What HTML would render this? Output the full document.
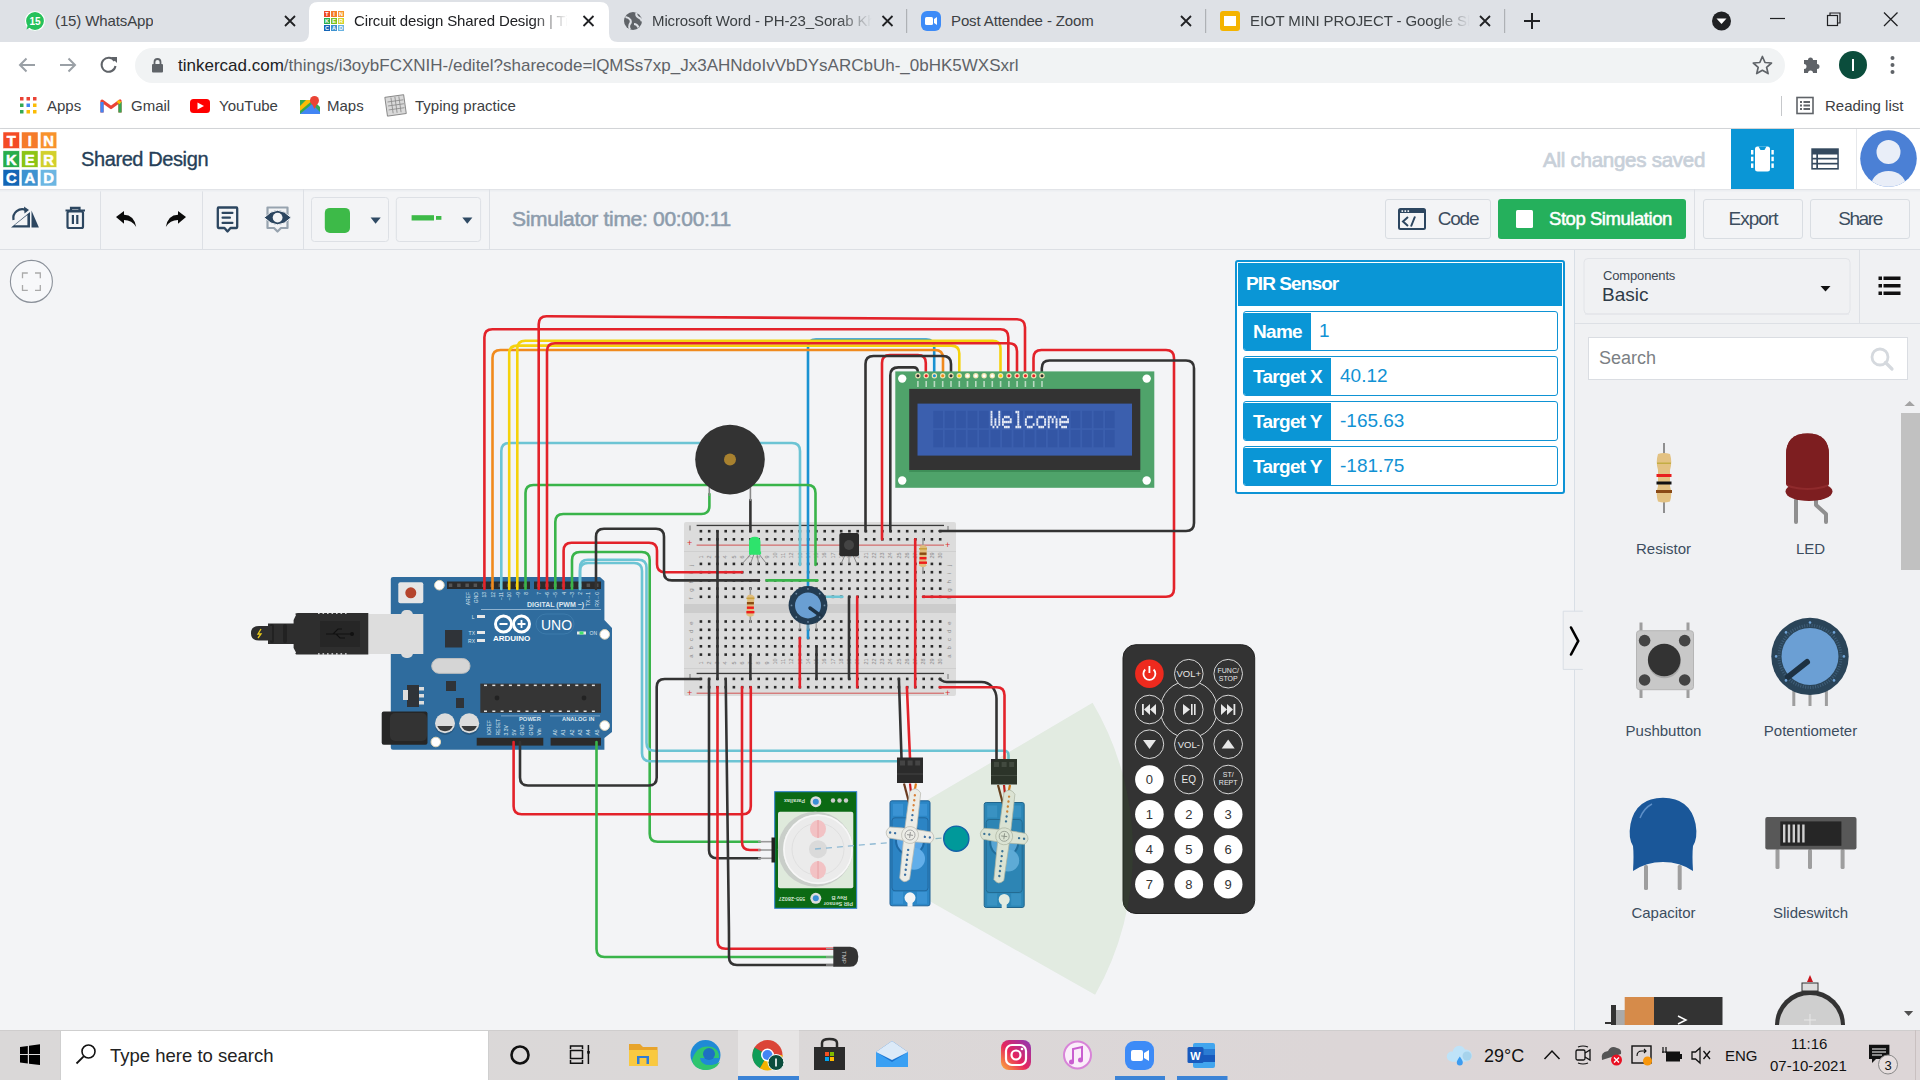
<!DOCTYPE html>
<html><head><meta charset="utf-8">
<style>
*{margin:0;padding:0;box-sizing:border-box}
html,body{width:1920px;height:1080px;overflow:hidden;background:#f3f4f6;font-family:"Liberation Sans",sans-serif}
.a{position:absolute}
#tabs{left:0;top:0;width:1920px;height:42px;background:#dee1e6}
.tab{position:absolute;top:0;height:42px;font-size:15px;color:#3c4043;line-height:42px;white-space:nowrap;overflow:hidden;letter-spacing:-0.12px}
.tabx{position:absolute;top:0;height:42px;}
#tb{left:0;top:42px;width:1920px;height:43px;background:#fff}
#omni{left:135px;top:48px;width:1650px;height:35px;background:#f1f3f4;border-radius:18px}
#bm{left:0;top:85px;width:1920px;height:44px;background:#fff;border-bottom:1px solid #d7d9dc}
.bmt{position:absolute;top:96px;font-size:15px;color:#3c4043;line-height:20px}
#hdr{left:0;top:129px;width:1920px;height:60px;background:#fff;box-shadow:0 1px 3px rgba(0,0,0,.12)}
#tool{left:0;top:189px;width:1920px;height:61px;background:#f3f4f6;border-bottom:1px solid #dcdfe4}
.btn{position:absolute;top:199px;height:40px;border:1px solid #d9dde2;border-radius:3px;background:transparent;color:#3c4d5e;font-size:19px;line-height:38px;text-align:center}
#rp{left:1574px;top:250px;width:346px;height:780px;background:#f0f1f3;border-left:1px solid #d9dfe6}
#taskbar{left:0;top:1030px;width:1920px;height:50px;background:linear-gradient(90deg,#dad8d8 0%,#dbd8d8 40%,#dcd6d7 70%,#ddd6d7 100%);border-top:1px solid #cfcdcd}
.clbl{position:absolute;font-size:15px;color:#3c4d5f;text-align:center;width:140px}
.prow{position:absolute;left:1243px;width:315px;height:40px;border:1px solid #0f93d4;border-radius:3px;background:#fff;overflow:hidden}
.prow .l{position:absolute;left:0;top:1px;height:37px;background:#0a96d6;color:#fff;font-weight:bold;font-size:19px;line-height:38px;padding-left:9px;letter-spacing:-0.7px;white-space:nowrap}
.prow .v{position:absolute;top:0;height:38px;color:#1192d4;font-size:19px;line-height:38px}
</style></head><body>
<!-- CHROME TABS -->
<div id="tabs" class="a"></div>
<svg class="a" style="left:0;top:0" width="1920" height="43" viewBox="0 0 1920 43">
<path d="M300 42 Q309 42 309 33 L309 11 Q309 2 318 2 L600 2 Q609 2 609 11 L609 33 Q609 42 618 42 Z" fill="#fff"/>
<g fill="#aeb1b5"><rect x="906" y="9" width="1.2" height="24"/><rect x="1205" y="9" width="1.2" height="24"/><rect x="1504" y="9" width="1.2" height="24"/></g>
<!-- whatsapp favicon -->
<circle cx="35" cy="21" r="9.5" fill="#25c15b" stroke="#fff" stroke-width="1.2"/><path d="M26.5 29.5 L28 24 L31 27 Z" fill="#25c15b"/>
<text x="35" y="25" font-size="10" font-weight="bold" fill="#fff" text-anchor="middle" font-family="Liberation Sans">15</text>
<!-- tinkercad favicon -->
<g transform="translate(324 11)">
<rect x="0" y="0" width="6" height="6" fill="#ef4b25"/><rect x="7" y="0" width="6" height="6" fill="#f57c2a"/><rect x="14" y="0" width="6" height="6" fill="#f7932c"/>
<rect x="0" y="7" width="6" height="6" fill="#2bae4a"/><rect x="7" y="7" width="6" height="6" fill="#7cc122"/><rect x="14" y="7" width="6" height="6" fill="#d3d12b"/>
<rect x="0" y="14" width="6" height="6" fill="#1565b7"/><rect x="7" y="14" width="6" height="6" fill="#3d91cf"/><rect x="14" y="14" width="6" height="6" fill="#69b3e1"/>
<g font-size="5.5" font-weight="bold" fill="#fff" text-anchor="middle" font-family="Liberation Sans"><text x="3" y="5">T</text><text x="10" y="5">I</text><text x="17" y="5">N</text><text x="3" y="12">K</text><text x="10" y="12">E</text><text x="17" y="12">R</text><text x="3" y="19">C</text><text x="10" y="19">A</text><text x="17" y="19">D</text></g>
</g>
<!-- globe favicon -->
<circle cx="633" cy="21" r="9" fill="#5f6368"/><path d="M625.5 17 Q629 17.5 630.5 20 Q631.5 22.5 629.5 24.5 Q628.5 27 630 29.5" stroke="#dee1e6" stroke-width="2" fill="none"/><path d="M636.5 12.8 Q635.5 16 638.5 17.5 Q641.5 18.5 641.8 21.5 M634 24 Q637 24 638.5 27.5" stroke="#dee1e6" stroke-width="2" fill="none"/>
<!-- zoom favicon -->
<rect x="921" y="11" width="20" height="20" rx="6" fill="#3d8bf7"/><rect x="925" y="17" width="8" height="8" rx="1.5" fill="#fff"/><path d="M934 19 L937 17 L937 25 L934 23 Z" fill="#fff"/>
<!-- slides favicon -->
<rect x="1220" y="11" width="20" height="20" rx="3" fill="#f4b400"/><rect x="1224" y="16" width="12" height="10" fill="#fff"/>
<!-- close x's -->
<g stroke="#202124" stroke-width="1.8">
<path d="M285 16 L295 26 M295 16 L285 26"/><path d="M583.5 16 L593.5 26 M593.5 16 L583.5 26"/><path d="M882.5 16 L892.5 26 M892.5 16 L882.5 26"/><path d="M1181 16 L1191 26 M1191 16 L1181 26"/><path d="M1480 16 L1490 26 M1490 16 L1480 26"/>
</g>
<path d="M1532 13 V29 M1524 21 H1540" stroke="#202124" stroke-width="2"/>
<circle cx="1721.5" cy="21" r="9.5" fill="#202124"/><path d="M1716.5 18.5 L1726.5 18.5 L1721.5 24 Z" fill="#fff"/>
<path d="M1770 18.5 H1785" stroke="#202124" stroke-width="1.2"/>
<rect x="1827.5" y="15.5" width="10" height="10" fill="none" stroke="#202124" stroke-width="1.2"/><path d="M1830 15.5 V13 H1840 V23 H1837.5" fill="none" stroke="#202124" stroke-width="1.2"/>
<path d="M1884 12.5 L1897.5 26 M1897.5 12.5 L1884 26" stroke="#202124" stroke-width="1.3"/>
</svg>
<div class="tab" style="left:55px;top:0">(15) WhatsApp</div>
<div class="tab" style="left:354px;width:218px;color:#202124;-webkit-mask-image:linear-gradient(90deg,#000 82%,transparent 98%)">Circuit design Shared Design | Tinkercad</div>
<div class="tab" style="left:652px;width:222px;-webkit-mask-image:linear-gradient(90deg,#000 84%,transparent 99%)">Microsoft Word - PH-23_Sorab Khan</div>
<div class="tab" style="left:951px">Post Attendee - Zoom</div>
<div class="tab" style="left:1250px;width:222px;-webkit-mask-image:linear-gradient(90deg,#000 84%,transparent 99%)">EIOT MINI PROJECT - Google Slides</div>

<!-- TOOLBAR -->
<div id="tb" class="a"></div>
<div id="bm" class="a"></div>
<div id="omni" class="a"></div>
<svg class="a" style="left:0;top:42px" width="1920" height="87" viewBox="0 42 1920 87">
<g stroke="#9aa0a6" stroke-width="2" fill="none"><path d="M35 65 H20 M26.5 58.5 L20 65 L26.5 71.5"/><path d="M60 65 H75 M68.5 58.5 L75 65 L68.5 71.5"/></g>
<path d="M114.5 61 A7 7 0 1 0 115.5 66" stroke="#5f6368" stroke-width="2" fill="none"/><path d="M111 57 L117 57 L117 63 Z" fill="#5f6368"/>
<rect x="152" y="64" width="11" height="8.5" rx="1" fill="#5f6368"/><path d="M154.5 64 V62 A3 3 0 0 1 160.5 62 V64" stroke="#5f6368" stroke-width="1.8" fill="none"/>
<path d="M1762.4 56.5 L1765 62.5 L1771.5 63 L1766.6 67.3 L1768.1 73.6 L1762.4 70.3 L1756.7 73.6 L1758.2 67.3 L1753.3 63 L1759.8 62.5 Z" fill="none" stroke="#5f6368" stroke-width="1.7" stroke-linejoin="round"/>
<path d="M1804 60 H1808 A2.5 2.5 0 0 1 1813 60 H1817 V64 A2.5 2.5 0 0 1 1817 69 V73 H1813 A2.5 2.5 0 0 0 1808 73 H1804 V69 A2.5 2.5 0 0 0 1804 64 Z" fill="#5f6368"/>
<circle cx="1853" cy="65" r="14" fill="#0b4d3c"/><rect x="1852" y="59" width="2" height="12" fill="#fff"/>
<g fill="#5f6368"><circle cx="1892.5" cy="58" r="2"/><circle cx="1892.5" cy="65" r="2"/><circle cx="1892.5" cy="72" r="2"/></g>
<!-- bookmarks icons -->
<g transform="translate(20 97)">
<rect x="0" y="0" width="3.5" height="3.5" fill="#ea4335"/><rect x="6.5" y="0" width="3.5" height="3.5" fill="#ea4335"/><rect x="13" y="0" width="3.5" height="3.5" fill="#ea4335"/>
<rect x="0" y="6.5" width="3.5" height="3.5" fill="#34a853"/><rect x="6.5" y="6.5" width="3.5" height="3.5" fill="#4285f4"/><rect x="13" y="6.5" width="3.5" height="3.5" fill="#fbbc05"/>
<rect x="0" y="13" width="3.5" height="3.5" fill="#34a853"/><rect x="6.5" y="13" width="3.5" height="3.5" fill="#fbbc05"/><rect x="13" y="13" width="3.5" height="3.5" fill="#fbbc05"/>
</g>
<path d="M102 112.5 V101 L111 107.5 L120 101 V112.5" fill="none" stroke="#ea4335" stroke-width="3.2" stroke-linejoin="round"/>
<path d="M102 112.5 V102" stroke="#4285f4" stroke-width="3.2"/><path d="M120 112.5 V102" stroke="#34a853" stroke-width="3.2"/><path d="M117.5 101 L120.5 103" stroke="#fbbc05" stroke-width="3"/>
<rect x="190" y="99" width="20" height="14" rx="3.5" fill="#ff0000"/><path d="M197.5 102.5 L204 106 L197.5 109.5 Z" fill="#fff"/>
<path d="M300 100 L313 100 L320 107 L320 114 L300 114 Z" fill="#34a853"/><path d="M300 114 L312 104 L320 112 L320 114 Z" fill="#4285f4"/><path d="M300 106 L306 100 L313 100 L300 111 Z" fill="#fbbc05"/>
<circle cx="314.5" cy="100.5" r="4.5" fill="#ea4335"/><path d="M311 102 L314.5 109 L318 102 Z" fill="#ea4335"/>
<rect x="386" y="96" width="19" height="19" fill="#d9d9d9" stroke="#777" stroke-width="0.8" transform="rotate(-8 395 105)"/><path d="M388 101 H404 M388 105 H404 M388 109 H404 M392 97 V113 M396 97 V113 M400 97 V113" stroke="#8a8a8a" stroke-width="0.8" transform="rotate(-8 395 105)"/>
<rect x="1781" y="96" width="1" height="20" fill="#c6c8cb"/>
<rect x="1797" y="97.5" width="16" height="16" fill="none" stroke="#5f6368" stroke-width="1.6"/>
<g fill="#5f6368"><rect x="1800" y="101" width="2" height="2"/><rect x="1800" y="104.5" width="2" height="2"/><rect x="1800" y="108" width="2" height="2"/><rect x="1803.5" y="101" width="6.5" height="2"/><rect x="1803.5" y="104.5" width="6.5" height="2"/><rect x="1803.5" y="108" width="6.5" height="2"/></g>
</svg>
<div class="a" style="left:178px;top:54px;font-size:17px;line-height:24px;color:#5f6368;white-space:nowrap"><span style="color:#202124">tinkercad.com</span>/things/i3oybFCXNIH-/editel?sharecode=lQMSs7xp_Jx3AHNdoIvVbDYsARCbUh-_0bHK5WXSxrl</div>

<!-- BOOKMARKS -->
<div class="bmt" style="left:47px">Apps</div>
<div class="bmt" style="left:131px">Gmail</div>
<div class="bmt" style="left:219px">YouTube</div>
<div class="bmt" style="left:327px">Maps</div>
<div class="bmt" style="left:415px">Typing practice</div>
<div class="bmt" style="left:1825px">Reading list</div>

<!-- TINKERCAD HEADER -->
<div id="hdr" class="a"></div>
<div id="tool" class="a"></div>
<svg class="a" style="left:0;top:129px" width="1920" height="121" viewBox="0 129 1920 121">
<g font-family="Liberation Sans" font-weight="bold" font-size="14.8" fill="#fff" stroke="#fff" stroke-width="0.5" text-anchor="middle">
<rect x="3" y="132" width="16.5" height="16.5" fill="#f44b25"/><rect x="21.5" y="132" width="16.5" height="16.5" fill="#f57b2b"/><rect x="40.3" y="132" width="16.5" height="16.5" fill="#f8922c"/>
<rect x="3" y="150.8" width="16.5" height="16.5" fill="#27ad4b"/><rect x="21.5" y="150.8" width="16.5" height="16.5" fill="#8cc414"/><rect x="40.3" y="150.8" width="16.5" height="16.5" fill="#d2d02c"/>
<rect x="3" y="169.5" width="16.5" height="16.5" fill="#1366b6"/><rect x="21.5" y="169.5" width="16.5" height="16.5" fill="#3e92d0"/><rect x="40.3" y="169.5" width="16.5" height="16.5" fill="#6cb6e2"/>
<text x="11.25" y="146">T</text><text x="29.75" y="146">I</text><text x="48.5" y="146">N</text>
<text x="11.25" y="164.5">K</text><text x="29.75" y="164.5">E</text><text x="48.5" y="164.5">R</text>
<text x="11.25" y="183">C</text><text x="29.75" y="183">A</text><text x="48.5" y="183">D</text>
</g>
<!-- chip icon in blue square -->
<rect x="1731" y="129" width="63" height="60" fill="#0a96d6"/>
<rect x="1755" y="146.5" width="15" height="25" rx="2.5" fill="#fff"/>
<path d="M1758.5 146.5 H1766.5 L1764.5 150 H1760.5 Z" fill="#0a96d6"/>
<g fill="#fff"><rect x="1751" y="150" width="2.4" height="4.5"/><rect x="1751" y="156.7" width="2.4" height="4.5"/><rect x="1751" y="163.4" width="2.4" height="4.5"/><rect x="1771.4" y="150" width="2.4" height="4.5"/><rect x="1771.4" y="156.7" width="2.4" height="4.5"/><rect x="1771.4" y="163.4" width="2.4" height="4.5"/></g>
<!-- table icon -->
<rect x="1811.3" y="148.3" width="27.5" height="21.3" fill="#34495e"/>
<g fill="#fff"><rect x="1812.8" y="154.5" width="3.5" height="3.3"/><rect x="1818" y="154.5" width="19.3" height="3.3"/><rect x="1812.8" y="159.5" width="3.5" height="3.3"/><rect x="1818" y="159.5" width="19.3" height="3.3"/><rect x="1812.8" y="164.5" width="3.5" height="3.5"/><rect x="1818" y="164.5" width="19.3" height="3.5"/></g>
<rect x="1856" y="129" width="1" height="60" fill="#e6e8eb"/>
<!-- avatar -->
<clipPath id="avc"><circle cx="1888.5" cy="158.5" r="28.3"/></clipPath>
<circle cx="1888.5" cy="158.5" r="28.3" fill="#4b80d5"/>
<g clip-path="url(#avc)" fill="#e9eef8"><circle cx="1888.5" cy="152" r="12"/><ellipse cx="1888.5" cy="185" rx="17" ry="14"/></g>
<!-- toolbar icons -->
<g fill="#2c4660">
<path d="M11 227.5 L30 212 L30 227.5 Z M14.5 225.2 L27.4 225.2 L27.4 215 Z" fill-rule="evenodd"/>
<path d="M31.5 227.5 L31.5 210.5 L38.9 227.5 Z"/>
</g>
<path d="M13.5 220 A9 9 0 0 1 26 210" stroke="#2c4660" stroke-width="2.2" fill="none"/><path d="M24 206.5 L29 210 L24.5 213.5 Z" fill="#2c4660"/>
<g fill="none" stroke="#2c4660" stroke-width="2.2">
<rect x="67.5" y="211.5" width="15.5" height="16.5" rx="1.5"/>
<path d="M65.5 210.5 H85 M71 210.5 V207.8 H79.5 V210.5"/>
</g>
<g fill="#2c4660"><rect x="71.8" y="215" width="2.2" height="9"/><rect x="76.2" y="215" width="2.2" height="9"/></g>
<path d="M116 217 L124 211 L124 214.8 Q134 215 136.2 227 Q132 220 124 220 L124 223.8 Z" fill="#0b0b0b"/>
<path d="M186 217 L178 211 L178 214.8 Q168 215 165.8 227 Q170 220 178 220 L178 223.8 Z" fill="#0b0b0b"/>
<rect x="100" y="189" width="1" height="60" fill="#dde0e5"/><rect x="202" y="189" width="1" height="60" fill="#dde0e5"/>
<rect x="0" y="189" width="1920" height="1" fill="#e2e4e8"/><rect x="0" y="190" width="1920" height="1.5" fill="#eceef1"/><rect x="303" y="189" width="1" height="60" fill="#dde0e5"/><rect x="489" y="189" width="1" height="60" fill="#dde0e5"/>
<path d="M218.5 207.5 H236.5 Q237.2 207.5 237.2 208.5 V227 Q237.2 228 236.5 228 H230.5 L227.5 231.5 L224.5 228 H218.5 Q217.8 228 217.8 227 V208.5 Q217.8 207.5 218.5 207.5 Z" fill="none" stroke="#2c4660" stroke-width="2.3" stroke-linejoin="round"/>
<g fill="#2c4660"><rect x="221.5" y="211.8" width="12" height="2.2" rx="1"/><rect x="221.5" y="216.5" width="9.5" height="2.2" rx="1"/><rect x="221.5" y="221.7" width="12" height="2.2" rx="1"/></g>
<path d="M267.5 207.5 H287.5 V228 H281 L277.5 231.5 L274 228 H267.5 Z" fill="none" stroke="#97a3af" stroke-width="2.2" stroke-linejoin="round"/>
<path d="M264.2 217.6 Q277.6 203 291.1 217.6 Q277.6 232 264.2 217.6 Z" fill="#2c4660" stroke="#f3f4f6" stroke-width="1"/>
<circle cx="277.6" cy="217.6" r="4.9" fill="#f3f4f6"/>
<!-- dropdowns -->
<rect x="311.5" y="197.5" width="77" height="44" rx="3" fill="#f3f4f6" stroke="#dde0e5" stroke-width="1"/>
<rect x="324.8" y="207.9" width="25.2" height="25" rx="5" fill="#3dba48"/>
<path d="M370.6 217.5 H380.7 L375.6 223.7 Z" fill="#2f4a64"/>
<rect x="396.3" y="197.5" width="84.3" height="44" rx="3" fill="#f3f4f6" stroke="#dde0e5" stroke-width="1"/>
<rect x="411.6" y="215.2" width="22.4" height="5.3" fill="#3dba48"/><rect x="436" y="216" width="5.4" height="3.8" fill="#3dba48"/>
<path d="M462.3 217.5 H472.4 L467.3 223.7 Z" fill="#2f4a64"/>
<!-- code icon -->
<rect x="1399" y="209" width="26" height="20" rx="1.5" fill="none" stroke="#2c4660" stroke-width="2"/>
<rect x="1399" y="209" width="26" height="4" fill="#2c4660"/>
<g fill="#fff"><rect x="1401.5" y="210.3" width="1.6" height="1.6"/><rect x="1404.5" y="210.3" width="1.6" height="1.6"/><rect x="1407.5" y="210.3" width="1.6" height="1.6"/></g>
<path d="M1408 217 L1403 221.5 L1408 226 M1411 226.5 L1415 216.5" stroke="#2c4660" stroke-width="2" fill="none"/>
<rect x="1694" y="189" width="1" height="60" fill="#dde0e5"/>
</svg>
<div class="a" style="left:81px;top:146px;font-size:20px;color:#263f58;line-height:26px;letter-spacing:-0.4px;-webkit-text-stroke:0.35px #263f58">Shared Design</div>
<div class="a" style="left:1543px;top:147px;font-size:20.5px;color:#c8d0d9;line-height:26px;letter-spacing:-0.25px;-webkit-text-stroke:0.7px #c8d0d9">All changes saved</div>

<!-- TOOLBAR 2 -->
<div class="a" style="left:512px;top:206px;font-size:21px;color:#8d9cac;line-height:26px;letter-spacing:-0.3px;-webkit-text-stroke:0.55px #8d9cac">Simulator time: 00:00:11</div>
<div class="btn" style="left:1385px;width:106px;padding-left:40px;letter-spacing:-1.2px">Code</div>
<div class="a" style="left:1498px;top:199px;width:188px;height:40px;background:#25b05c;border-radius:3px;color:#fff;font-size:18.5px;line-height:40px;padding-left:51px;white-space:nowrap;letter-spacing:-0.45px;-webkit-text-stroke:0.5px #fff"><span style="position:absolute;left:17.5px;top:11px;width:17.5px;height:17.5px;background:#fff;border-radius:1.5px"></span>Stop Simulation</div>
<div class="btn" style="left:1703px;width:100px;letter-spacing:-1px">Export</div>
<div class="btn" style="left:1810px;width:100px;letter-spacing:-1.4px">Share</div>

<svg class="a" style="left:0;top:0" width="1920" height="1080" viewBox="0 0 1920 1080"><rect x="684" y="522" width="272" height="174" rx="2" fill="#dcdcdc"/><rect x="684" y="551" width="272" height="1" fill="#cfcfcf"/><rect x="684" y="668" width="272" height="1" fill="#cfcfcf"/><rect x="684" y="604" width="272" height="9" fill="#cccccc"/><rect x="696.6" y="524.8" width="247.4" height="1.3" fill="#3a3a3a"/><rect x="696.6" y="544.5" width="247.4" height="1.3" fill="#d47373"/><rect x="696.6" y="672.8" width="247.4" height="1.3" fill="#3a3a3a"/><rect x="696.6" y="692.6" width="247.4" height="1.3" fill="#d47373"/><g fill="#2a2a2a"><rect x="699.6" y="529.9" width="2.6" height="2.6"/><rect x="707.9" y="529.9" width="2.6" height="2.6"/><rect x="716.1" y="529.9" width="2.6" height="2.6"/><rect x="724.4" y="529.9" width="2.6" height="2.6"/><rect x="732.6" y="529.9" width="2.6" height="2.6"/><rect x="740.9" y="529.9" width="2.6" height="2.6"/><rect x="749.1" y="529.9" width="2.6" height="2.6"/><rect x="757.4" y="529.9" width="2.6" height="2.6"/><rect x="765.6" y="529.9" width="2.6" height="2.6"/><rect x="773.9" y="529.9" width="2.6" height="2.6"/><rect x="782.1" y="529.9" width="2.6" height="2.6"/><rect x="790.4" y="529.9" width="2.6" height="2.6"/><rect x="798.6" y="529.9" width="2.6" height="2.6"/><rect x="806.9" y="529.9" width="2.6" height="2.6"/><rect x="815.1" y="529.9" width="2.6" height="2.6"/><rect x="823.4" y="529.9" width="2.6" height="2.6"/><rect x="831.6" y="529.9" width="2.6" height="2.6"/><rect x="839.9" y="529.9" width="2.6" height="2.6"/><rect x="848.1" y="529.9" width="2.6" height="2.6"/><rect x="856.4" y="529.9" width="2.6" height="2.6"/><rect x="864.6" y="529.9" width="2.6" height="2.6"/><rect x="872.9" y="529.9" width="2.6" height="2.6"/><rect x="881.1" y="529.9" width="2.6" height="2.6"/><rect x="889.4" y="529.9" width="2.6" height="2.6"/><rect x="897.6" y="529.9" width="2.6" height="2.6"/><rect x="905.9" y="529.9" width="2.6" height="2.6"/><rect x="914.1" y="529.9" width="2.6" height="2.6"/><rect x="922.4" y="529.9" width="2.6" height="2.6"/><rect x="930.6" y="529.9" width="2.6" height="2.6"/><rect x="938.9" y="529.9" width="2.6" height="2.6"/><rect x="699.6" y="538.0" width="2.6" height="2.6"/><rect x="707.9" y="538.0" width="2.6" height="2.6"/><rect x="716.1" y="538.0" width="2.6" height="2.6"/><rect x="724.4" y="538.0" width="2.6" height="2.6"/><rect x="732.6" y="538.0" width="2.6" height="2.6"/><rect x="740.9" y="538.0" width="2.6" height="2.6"/><rect x="749.1" y="538.0" width="2.6" height="2.6"/><rect x="757.4" y="538.0" width="2.6" height="2.6"/><rect x="765.6" y="538.0" width="2.6" height="2.6"/><rect x="773.9" y="538.0" width="2.6" height="2.6"/><rect x="782.1" y="538.0" width="2.6" height="2.6"/><rect x="790.4" y="538.0" width="2.6" height="2.6"/><rect x="798.6" y="538.0" width="2.6" height="2.6"/><rect x="806.9" y="538.0" width="2.6" height="2.6"/><rect x="815.1" y="538.0" width="2.6" height="2.6"/><rect x="823.4" y="538.0" width="2.6" height="2.6"/><rect x="831.6" y="538.0" width="2.6" height="2.6"/><rect x="839.9" y="538.0" width="2.6" height="2.6"/><rect x="848.1" y="538.0" width="2.6" height="2.6"/><rect x="856.4" y="538.0" width="2.6" height="2.6"/><rect x="864.6" y="538.0" width="2.6" height="2.6"/><rect x="872.9" y="538.0" width="2.6" height="2.6"/><rect x="881.1" y="538.0" width="2.6" height="2.6"/><rect x="889.4" y="538.0" width="2.6" height="2.6"/><rect x="897.6" y="538.0" width="2.6" height="2.6"/><rect x="905.9" y="538.0" width="2.6" height="2.6"/><rect x="914.1" y="538.0" width="2.6" height="2.6"/><rect x="922.4" y="538.0" width="2.6" height="2.6"/><rect x="930.6" y="538.0" width="2.6" height="2.6"/><rect x="938.9" y="538.0" width="2.6" height="2.6"/><rect x="699.6" y="677.6" width="2.6" height="2.6"/><rect x="707.9" y="677.6" width="2.6" height="2.6"/><rect x="716.1" y="677.6" width="2.6" height="2.6"/><rect x="724.4" y="677.6" width="2.6" height="2.6"/><rect x="732.6" y="677.6" width="2.6" height="2.6"/><rect x="740.9" y="677.6" width="2.6" height="2.6"/><rect x="749.1" y="677.6" width="2.6" height="2.6"/><rect x="757.4" y="677.6" width="2.6" height="2.6"/><rect x="765.6" y="677.6" width="2.6" height="2.6"/><rect x="773.9" y="677.6" width="2.6" height="2.6"/><rect x="782.1" y="677.6" width="2.6" height="2.6"/><rect x="790.4" y="677.6" width="2.6" height="2.6"/><rect x="798.6" y="677.6" width="2.6" height="2.6"/><rect x="806.9" y="677.6" width="2.6" height="2.6"/><rect x="815.1" y="677.6" width="2.6" height="2.6"/><rect x="823.4" y="677.6" width="2.6" height="2.6"/><rect x="831.6" y="677.6" width="2.6" height="2.6"/><rect x="839.9" y="677.6" width="2.6" height="2.6"/><rect x="848.1" y="677.6" width="2.6" height="2.6"/><rect x="856.4" y="677.6" width="2.6" height="2.6"/><rect x="864.6" y="677.6" width="2.6" height="2.6"/><rect x="872.9" y="677.6" width="2.6" height="2.6"/><rect x="881.1" y="677.6" width="2.6" height="2.6"/><rect x="889.4" y="677.6" width="2.6" height="2.6"/><rect x="897.6" y="677.6" width="2.6" height="2.6"/><rect x="905.9" y="677.6" width="2.6" height="2.6"/><rect x="914.1" y="677.6" width="2.6" height="2.6"/><rect x="922.4" y="677.6" width="2.6" height="2.6"/><rect x="930.6" y="677.6" width="2.6" height="2.6"/><rect x="938.9" y="677.6" width="2.6" height="2.6"/><rect x="699.6" y="685.9" width="2.6" height="2.6"/><rect x="707.9" y="685.9" width="2.6" height="2.6"/><rect x="716.1" y="685.9" width="2.6" height="2.6"/><rect x="724.4" y="685.9" width="2.6" height="2.6"/><rect x="732.6" y="685.9" width="2.6" height="2.6"/><rect x="740.9" y="685.9" width="2.6" height="2.6"/><rect x="749.1" y="685.9" width="2.6" height="2.6"/><rect x="757.4" y="685.9" width="2.6" height="2.6"/><rect x="765.6" y="685.9" width="2.6" height="2.6"/><rect x="773.9" y="685.9" width="2.6" height="2.6"/><rect x="782.1" y="685.9" width="2.6" height="2.6"/><rect x="790.4" y="685.9" width="2.6" height="2.6"/><rect x="798.6" y="685.9" width="2.6" height="2.6"/><rect x="806.9" y="685.9" width="2.6" height="2.6"/><rect x="815.1" y="685.9" width="2.6" height="2.6"/><rect x="823.4" y="685.9" width="2.6" height="2.6"/><rect x="831.6" y="685.9" width="2.6" height="2.6"/><rect x="839.9" y="685.9" width="2.6" height="2.6"/><rect x="848.1" y="685.9" width="2.6" height="2.6"/><rect x="856.4" y="685.9" width="2.6" height="2.6"/><rect x="864.6" y="685.9" width="2.6" height="2.6"/><rect x="872.9" y="685.9" width="2.6" height="2.6"/><rect x="881.1" y="685.9" width="2.6" height="2.6"/><rect x="889.4" y="685.9" width="2.6" height="2.6"/><rect x="897.6" y="685.9" width="2.6" height="2.6"/><rect x="905.9" y="685.9" width="2.6" height="2.6"/><rect x="914.1" y="685.9" width="2.6" height="2.6"/><rect x="922.4" y="685.9" width="2.6" height="2.6"/><rect x="930.6" y="685.9" width="2.6" height="2.6"/><rect x="938.9" y="685.9" width="2.6" height="2.6"/><rect x="699.6" y="562.6" width="2.6" height="2.6"/><rect x="707.9" y="562.6" width="2.6" height="2.6"/><rect x="716.1" y="562.6" width="2.6" height="2.6"/><rect x="724.4" y="562.6" width="2.6" height="2.6"/><rect x="732.6" y="562.6" width="2.6" height="2.6"/><rect x="740.9" y="562.6" width="2.6" height="2.6"/><rect x="749.1" y="562.6" width="2.6" height="2.6"/><rect x="757.4" y="562.6" width="2.6" height="2.6"/><rect x="765.6" y="562.6" width="2.6" height="2.6"/><rect x="773.9" y="562.6" width="2.6" height="2.6"/><rect x="782.1" y="562.6" width="2.6" height="2.6"/><rect x="790.4" y="562.6" width="2.6" height="2.6"/><rect x="798.6" y="562.6" width="2.6" height="2.6"/><rect x="806.9" y="562.6" width="2.6" height="2.6"/><rect x="815.1" y="562.6" width="2.6" height="2.6"/><rect x="823.4" y="562.6" width="2.6" height="2.6"/><rect x="831.6" y="562.6" width="2.6" height="2.6"/><rect x="839.9" y="562.6" width="2.6" height="2.6"/><rect x="848.1" y="562.6" width="2.6" height="2.6"/><rect x="856.4" y="562.6" width="2.6" height="2.6"/><rect x="864.6" y="562.6" width="2.6" height="2.6"/><rect x="872.9" y="562.6" width="2.6" height="2.6"/><rect x="881.1" y="562.6" width="2.6" height="2.6"/><rect x="889.4" y="562.6" width="2.6" height="2.6"/><rect x="897.6" y="562.6" width="2.6" height="2.6"/><rect x="905.9" y="562.6" width="2.6" height="2.6"/><rect x="914.1" y="562.6" width="2.6" height="2.6"/><rect x="922.4" y="562.6" width="2.6" height="2.6"/><rect x="930.6" y="562.6" width="2.6" height="2.6"/><rect x="938.9" y="562.6" width="2.6" height="2.6"/><rect x="699.6" y="570.9" width="2.6" height="2.6"/><rect x="707.9" y="570.9" width="2.6" height="2.6"/><rect x="716.1" y="570.9" width="2.6" height="2.6"/><rect x="724.4" y="570.9" width="2.6" height="2.6"/><rect x="732.6" y="570.9" width="2.6" height="2.6"/><rect x="740.9" y="570.9" width="2.6" height="2.6"/><rect x="749.1" y="570.9" width="2.6" height="2.6"/><rect x="757.4" y="570.9" width="2.6" height="2.6"/><rect x="765.6" y="570.9" width="2.6" height="2.6"/><rect x="773.9" y="570.9" width="2.6" height="2.6"/><rect x="782.1" y="570.9" width="2.6" height="2.6"/><rect x="790.4" y="570.9" width="2.6" height="2.6"/><rect x="798.6" y="570.9" width="2.6" height="2.6"/><rect x="806.9" y="570.9" width="2.6" height="2.6"/><rect x="815.1" y="570.9" width="2.6" height="2.6"/><rect x="823.4" y="570.9" width="2.6" height="2.6"/><rect x="831.6" y="570.9" width="2.6" height="2.6"/><rect x="839.9" y="570.9" width="2.6" height="2.6"/><rect x="848.1" y="570.9" width="2.6" height="2.6"/><rect x="856.4" y="570.9" width="2.6" height="2.6"/><rect x="864.6" y="570.9" width="2.6" height="2.6"/><rect x="872.9" y="570.9" width="2.6" height="2.6"/><rect x="881.1" y="570.9" width="2.6" height="2.6"/><rect x="889.4" y="570.9" width="2.6" height="2.6"/><rect x="897.6" y="570.9" width="2.6" height="2.6"/><rect x="905.9" y="570.9" width="2.6" height="2.6"/><rect x="914.1" y="570.9" width="2.6" height="2.6"/><rect x="922.4" y="570.9" width="2.6" height="2.6"/><rect x="930.6" y="570.9" width="2.6" height="2.6"/><rect x="938.9" y="570.9" width="2.6" height="2.6"/><rect x="699.6" y="579.1" width="2.6" height="2.6"/><rect x="707.9" y="579.1" width="2.6" height="2.6"/><rect x="716.1" y="579.1" width="2.6" height="2.6"/><rect x="724.4" y="579.1" width="2.6" height="2.6"/><rect x="732.6" y="579.1" width="2.6" height="2.6"/><rect x="740.9" y="579.1" width="2.6" height="2.6"/><rect x="749.1" y="579.1" width="2.6" height="2.6"/><rect x="757.4" y="579.1" width="2.6" height="2.6"/><rect x="765.6" y="579.1" width="2.6" height="2.6"/><rect x="773.9" y="579.1" width="2.6" height="2.6"/><rect x="782.1" y="579.1" width="2.6" height="2.6"/><rect x="790.4" y="579.1" width="2.6" height="2.6"/><rect x="798.6" y="579.1" width="2.6" height="2.6"/><rect x="806.9" y="579.1" width="2.6" height="2.6"/><rect x="815.1" y="579.1" width="2.6" height="2.6"/><rect x="823.4" y="579.1" width="2.6" height="2.6"/><rect x="831.6" y="579.1" width="2.6" height="2.6"/><rect x="839.9" y="579.1" width="2.6" height="2.6"/><rect x="848.1" y="579.1" width="2.6" height="2.6"/><rect x="856.4" y="579.1" width="2.6" height="2.6"/><rect x="864.6" y="579.1" width="2.6" height="2.6"/><rect x="872.9" y="579.1" width="2.6" height="2.6"/><rect x="881.1" y="579.1" width="2.6" height="2.6"/><rect x="889.4" y="579.1" width="2.6" height="2.6"/><rect x="897.6" y="579.1" width="2.6" height="2.6"/><rect x="905.9" y="579.1" width="2.6" height="2.6"/><rect x="914.1" y="579.1" width="2.6" height="2.6"/><rect x="922.4" y="579.1" width="2.6" height="2.6"/><rect x="930.6" y="579.1" width="2.6" height="2.6"/><rect x="938.9" y="579.1" width="2.6" height="2.6"/><rect x="699.6" y="587.3" width="2.6" height="2.6"/><rect x="707.9" y="587.3" width="2.6" height="2.6"/><rect x="716.1" y="587.3" width="2.6" height="2.6"/><rect x="724.4" y="587.3" width="2.6" height="2.6"/><rect x="732.6" y="587.3" width="2.6" height="2.6"/><rect x="740.9" y="587.3" width="2.6" height="2.6"/><rect x="749.1" y="587.3" width="2.6" height="2.6"/><rect x="757.4" y="587.3" width="2.6" height="2.6"/><rect x="765.6" y="587.3" width="2.6" height="2.6"/><rect x="773.9" y="587.3" width="2.6" height="2.6"/><rect x="782.1" y="587.3" width="2.6" height="2.6"/><rect x="790.4" y="587.3" width="2.6" height="2.6"/><rect x="798.6" y="587.3" width="2.6" height="2.6"/><rect x="806.9" y="587.3" width="2.6" height="2.6"/><rect x="815.1" y="587.3" width="2.6" height="2.6"/><rect x="823.4" y="587.3" width="2.6" height="2.6"/><rect x="831.6" y="587.3" width="2.6" height="2.6"/><rect x="839.9" y="587.3" width="2.6" height="2.6"/><rect x="848.1" y="587.3" width="2.6" height="2.6"/><rect x="856.4" y="587.3" width="2.6" height="2.6"/><rect x="864.6" y="587.3" width="2.6" height="2.6"/><rect x="872.9" y="587.3" width="2.6" height="2.6"/><rect x="881.1" y="587.3" width="2.6" height="2.6"/><rect x="889.4" y="587.3" width="2.6" height="2.6"/><rect x="897.6" y="587.3" width="2.6" height="2.6"/><rect x="905.9" y="587.3" width="2.6" height="2.6"/><rect x="914.1" y="587.3" width="2.6" height="2.6"/><rect x="922.4" y="587.3" width="2.6" height="2.6"/><rect x="930.6" y="587.3" width="2.6" height="2.6"/><rect x="938.9" y="587.3" width="2.6" height="2.6"/><rect x="699.6" y="595.5" width="2.6" height="2.6"/><rect x="707.9" y="595.5" width="2.6" height="2.6"/><rect x="716.1" y="595.5" width="2.6" height="2.6"/><rect x="724.4" y="595.5" width="2.6" height="2.6"/><rect x="732.6" y="595.5" width="2.6" height="2.6"/><rect x="740.9" y="595.5" width="2.6" height="2.6"/><rect x="749.1" y="595.5" width="2.6" height="2.6"/><rect x="757.4" y="595.5" width="2.6" height="2.6"/><rect x="765.6" y="595.5" width="2.6" height="2.6"/><rect x="773.9" y="595.5" width="2.6" height="2.6"/><rect x="782.1" y="595.5" width="2.6" height="2.6"/><rect x="790.4" y="595.5" width="2.6" height="2.6"/><rect x="798.6" y="595.5" width="2.6" height="2.6"/><rect x="806.9" y="595.5" width="2.6" height="2.6"/><rect x="815.1" y="595.5" width="2.6" height="2.6"/><rect x="823.4" y="595.5" width="2.6" height="2.6"/><rect x="831.6" y="595.5" width="2.6" height="2.6"/><rect x="839.9" y="595.5" width="2.6" height="2.6"/><rect x="848.1" y="595.5" width="2.6" height="2.6"/><rect x="856.4" y="595.5" width="2.6" height="2.6"/><rect x="864.6" y="595.5" width="2.6" height="2.6"/><rect x="872.9" y="595.5" width="2.6" height="2.6"/><rect x="881.1" y="595.5" width="2.6" height="2.6"/><rect x="889.4" y="595.5" width="2.6" height="2.6"/><rect x="897.6" y="595.5" width="2.6" height="2.6"/><rect x="905.9" y="595.5" width="2.6" height="2.6"/><rect x="914.1" y="595.5" width="2.6" height="2.6"/><rect x="922.4" y="595.5" width="2.6" height="2.6"/><rect x="930.6" y="595.5" width="2.6" height="2.6"/><rect x="938.9" y="595.5" width="2.6" height="2.6"/><rect x="699.6" y="620.2" width="2.6" height="2.6"/><rect x="707.9" y="620.2" width="2.6" height="2.6"/><rect x="716.1" y="620.2" width="2.6" height="2.6"/><rect x="724.4" y="620.2" width="2.6" height="2.6"/><rect x="732.6" y="620.2" width="2.6" height="2.6"/><rect x="740.9" y="620.2" width="2.6" height="2.6"/><rect x="749.1" y="620.2" width="2.6" height="2.6"/><rect x="757.4" y="620.2" width="2.6" height="2.6"/><rect x="765.6" y="620.2" width="2.6" height="2.6"/><rect x="773.9" y="620.2" width="2.6" height="2.6"/><rect x="782.1" y="620.2" width="2.6" height="2.6"/><rect x="790.4" y="620.2" width="2.6" height="2.6"/><rect x="798.6" y="620.2" width="2.6" height="2.6"/><rect x="806.9" y="620.2" width="2.6" height="2.6"/><rect x="815.1" y="620.2" width="2.6" height="2.6"/><rect x="823.4" y="620.2" width="2.6" height="2.6"/><rect x="831.6" y="620.2" width="2.6" height="2.6"/><rect x="839.9" y="620.2" width="2.6" height="2.6"/><rect x="848.1" y="620.2" width="2.6" height="2.6"/><rect x="856.4" y="620.2" width="2.6" height="2.6"/><rect x="864.6" y="620.2" width="2.6" height="2.6"/><rect x="872.9" y="620.2" width="2.6" height="2.6"/><rect x="881.1" y="620.2" width="2.6" height="2.6"/><rect x="889.4" y="620.2" width="2.6" height="2.6"/><rect x="897.6" y="620.2" width="2.6" height="2.6"/><rect x="905.9" y="620.2" width="2.6" height="2.6"/><rect x="914.1" y="620.2" width="2.6" height="2.6"/><rect x="922.4" y="620.2" width="2.6" height="2.6"/><rect x="930.6" y="620.2" width="2.6" height="2.6"/><rect x="938.9" y="620.2" width="2.6" height="2.6"/><rect x="699.6" y="628.5" width="2.6" height="2.6"/><rect x="707.9" y="628.5" width="2.6" height="2.6"/><rect x="716.1" y="628.5" width="2.6" height="2.6"/><rect x="724.4" y="628.5" width="2.6" height="2.6"/><rect x="732.6" y="628.5" width="2.6" height="2.6"/><rect x="740.9" y="628.5" width="2.6" height="2.6"/><rect x="749.1" y="628.5" width="2.6" height="2.6"/><rect x="757.4" y="628.5" width="2.6" height="2.6"/><rect x="765.6" y="628.5" width="2.6" height="2.6"/><rect x="773.9" y="628.5" width="2.6" height="2.6"/><rect x="782.1" y="628.5" width="2.6" height="2.6"/><rect x="790.4" y="628.5" width="2.6" height="2.6"/><rect x="798.6" y="628.5" width="2.6" height="2.6"/><rect x="806.9" y="628.5" width="2.6" height="2.6"/><rect x="815.1" y="628.5" width="2.6" height="2.6"/><rect x="823.4" y="628.5" width="2.6" height="2.6"/><rect x="831.6" y="628.5" width="2.6" height="2.6"/><rect x="839.9" y="628.5" width="2.6" height="2.6"/><rect x="848.1" y="628.5" width="2.6" height="2.6"/><rect x="856.4" y="628.5" width="2.6" height="2.6"/><rect x="864.6" y="628.5" width="2.6" height="2.6"/><rect x="872.9" y="628.5" width="2.6" height="2.6"/><rect x="881.1" y="628.5" width="2.6" height="2.6"/><rect x="889.4" y="628.5" width="2.6" height="2.6"/><rect x="897.6" y="628.5" width="2.6" height="2.6"/><rect x="905.9" y="628.5" width="2.6" height="2.6"/><rect x="914.1" y="628.5" width="2.6" height="2.6"/><rect x="922.4" y="628.5" width="2.6" height="2.6"/><rect x="930.6" y="628.5" width="2.6" height="2.6"/><rect x="938.9" y="628.5" width="2.6" height="2.6"/><rect x="699.6" y="636.7" width="2.6" height="2.6"/><rect x="707.9" y="636.7" width="2.6" height="2.6"/><rect x="716.1" y="636.7" width="2.6" height="2.6"/><rect x="724.4" y="636.7" width="2.6" height="2.6"/><rect x="732.6" y="636.7" width="2.6" height="2.6"/><rect x="740.9" y="636.7" width="2.6" height="2.6"/><rect x="749.1" y="636.7" width="2.6" height="2.6"/><rect x="757.4" y="636.7" width="2.6" height="2.6"/><rect x="765.6" y="636.7" width="2.6" height="2.6"/><rect x="773.9" y="636.7" width="2.6" height="2.6"/><rect x="782.1" y="636.7" width="2.6" height="2.6"/><rect x="790.4" y="636.7" width="2.6" height="2.6"/><rect x="798.6" y="636.7" width="2.6" height="2.6"/><rect x="806.9" y="636.7" width="2.6" height="2.6"/><rect x="815.1" y="636.7" width="2.6" height="2.6"/><rect x="823.4" y="636.7" width="2.6" height="2.6"/><rect x="831.6" y="636.7" width="2.6" height="2.6"/><rect x="839.9" y="636.7" width="2.6" height="2.6"/><rect x="848.1" y="636.7" width="2.6" height="2.6"/><rect x="856.4" y="636.7" width="2.6" height="2.6"/><rect x="864.6" y="636.7" width="2.6" height="2.6"/><rect x="872.9" y="636.7" width="2.6" height="2.6"/><rect x="881.1" y="636.7" width="2.6" height="2.6"/><rect x="889.4" y="636.7" width="2.6" height="2.6"/><rect x="897.6" y="636.7" width="2.6" height="2.6"/><rect x="905.9" y="636.7" width="2.6" height="2.6"/><rect x="914.1" y="636.7" width="2.6" height="2.6"/><rect x="922.4" y="636.7" width="2.6" height="2.6"/><rect x="930.6" y="636.7" width="2.6" height="2.6"/><rect x="938.9" y="636.7" width="2.6" height="2.6"/><rect x="699.6" y="645.0" width="2.6" height="2.6"/><rect x="707.9" y="645.0" width="2.6" height="2.6"/><rect x="716.1" y="645.0" width="2.6" height="2.6"/><rect x="724.4" y="645.0" width="2.6" height="2.6"/><rect x="732.6" y="645.0" width="2.6" height="2.6"/><rect x="740.9" y="645.0" width="2.6" height="2.6"/><rect x="749.1" y="645.0" width="2.6" height="2.6"/><rect x="757.4" y="645.0" width="2.6" height="2.6"/><rect x="765.6" y="645.0" width="2.6" height="2.6"/><rect x="773.9" y="645.0" width="2.6" height="2.6"/><rect x="782.1" y="645.0" width="2.6" height="2.6"/><rect x="790.4" y="645.0" width="2.6" height="2.6"/><rect x="798.6" y="645.0" width="2.6" height="2.6"/><rect x="806.9" y="645.0" width="2.6" height="2.6"/><rect x="815.1" y="645.0" width="2.6" height="2.6"/><rect x="823.4" y="645.0" width="2.6" height="2.6"/><rect x="831.6" y="645.0" width="2.6" height="2.6"/><rect x="839.9" y="645.0" width="2.6" height="2.6"/><rect x="848.1" y="645.0" width="2.6" height="2.6"/><rect x="856.4" y="645.0" width="2.6" height="2.6"/><rect x="864.6" y="645.0" width="2.6" height="2.6"/><rect x="872.9" y="645.0" width="2.6" height="2.6"/><rect x="881.1" y="645.0" width="2.6" height="2.6"/><rect x="889.4" y="645.0" width="2.6" height="2.6"/><rect x="897.6" y="645.0" width="2.6" height="2.6"/><rect x="905.9" y="645.0" width="2.6" height="2.6"/><rect x="914.1" y="645.0" width="2.6" height="2.6"/><rect x="922.4" y="645.0" width="2.6" height="2.6"/><rect x="930.6" y="645.0" width="2.6" height="2.6"/><rect x="938.9" y="645.0" width="2.6" height="2.6"/><rect x="699.6" y="653.3" width="2.6" height="2.6"/><rect x="707.9" y="653.3" width="2.6" height="2.6"/><rect x="716.1" y="653.3" width="2.6" height="2.6"/><rect x="724.4" y="653.3" width="2.6" height="2.6"/><rect x="732.6" y="653.3" width="2.6" height="2.6"/><rect x="740.9" y="653.3" width="2.6" height="2.6"/><rect x="749.1" y="653.3" width="2.6" height="2.6"/><rect x="757.4" y="653.3" width="2.6" height="2.6"/><rect x="765.6" y="653.3" width="2.6" height="2.6"/><rect x="773.9" y="653.3" width="2.6" height="2.6"/><rect x="782.1" y="653.3" width="2.6" height="2.6"/><rect x="790.4" y="653.3" width="2.6" height="2.6"/><rect x="798.6" y="653.3" width="2.6" height="2.6"/><rect x="806.9" y="653.3" width="2.6" height="2.6"/><rect x="815.1" y="653.3" width="2.6" height="2.6"/><rect x="823.4" y="653.3" width="2.6" height="2.6"/><rect x="831.6" y="653.3" width="2.6" height="2.6"/><rect x="839.9" y="653.3" width="2.6" height="2.6"/><rect x="848.1" y="653.3" width="2.6" height="2.6"/><rect x="856.4" y="653.3" width="2.6" height="2.6"/><rect x="864.6" y="653.3" width="2.6" height="2.6"/><rect x="872.9" y="653.3" width="2.6" height="2.6"/><rect x="881.1" y="653.3" width="2.6" height="2.6"/><rect x="889.4" y="653.3" width="2.6" height="2.6"/><rect x="897.6" y="653.3" width="2.6" height="2.6"/><rect x="905.9" y="653.3" width="2.6" height="2.6"/><rect x="914.1" y="653.3" width="2.6" height="2.6"/><rect x="922.4" y="653.3" width="2.6" height="2.6"/><rect x="930.6" y="653.3" width="2.6" height="2.6"/><rect x="938.9" y="653.3" width="2.6" height="2.6"/></g><g font-size="5.5" fill="#8a8a8a" font-family="Liberation Sans"><text transform="translate(702.7 558.5) rotate(-90)">1</text><text transform="translate(702.7 664.5) rotate(-90)">1</text><text transform="translate(710.9 558.5) rotate(-90)">2</text><text transform="translate(710.9 664.5) rotate(-90)">2</text><text transform="translate(719.2 558.5) rotate(-90)">3</text><text transform="translate(719.2 664.5) rotate(-90)">3</text><text transform="translate(727.4 558.5) rotate(-90)">4</text><text transform="translate(727.4 664.5) rotate(-90)">4</text><text transform="translate(735.7 558.5) rotate(-90)">5</text><text transform="translate(735.7 664.5) rotate(-90)">5</text><text transform="translate(743.9 558.5) rotate(-90)">6</text><text transform="translate(743.9 664.5) rotate(-90)">6</text><text transform="translate(752.2 558.5) rotate(-90)">7</text><text transform="translate(752.2 664.5) rotate(-90)">7</text><text transform="translate(760.4 558.5) rotate(-90)">8</text><text transform="translate(760.4 664.5) rotate(-90)">8</text><text transform="translate(768.7 558.5) rotate(-90)">9</text><text transform="translate(768.7 664.5) rotate(-90)">9</text><text transform="translate(776.9 558.5) rotate(-90)">10</text><text transform="translate(776.9 664.5) rotate(-90)">10</text><text transform="translate(785.2 558.5) rotate(-90)">11</text><text transform="translate(785.2 664.5) rotate(-90)">11</text><text transform="translate(793.4 558.5) rotate(-90)">12</text><text transform="translate(793.4 664.5) rotate(-90)">12</text><text transform="translate(801.7 558.5) rotate(-90)">13</text><text transform="translate(801.7 664.5) rotate(-90)">13</text><text transform="translate(809.9 558.5) rotate(-90)">14</text><text transform="translate(809.9 664.5) rotate(-90)">14</text><text transform="translate(818.2 558.5) rotate(-90)">15</text><text transform="translate(818.2 664.5) rotate(-90)">15</text><text transform="translate(826.4 558.5) rotate(-90)">16</text><text transform="translate(826.4 664.5) rotate(-90)">16</text><text transform="translate(834.7 558.5) rotate(-90)">17</text><text transform="translate(834.7 664.5) rotate(-90)">17</text><text transform="translate(842.9 558.5) rotate(-90)">18</text><text transform="translate(842.9 664.5) rotate(-90)">18</text><text transform="translate(851.2 558.5) rotate(-90)">19</text><text transform="translate(851.2 664.5) rotate(-90)">19</text><text transform="translate(859.4 558.5) rotate(-90)">20</text><text transform="translate(859.4 664.5) rotate(-90)">20</text><text transform="translate(867.7 558.5) rotate(-90)">21</text><text transform="translate(867.7 664.5) rotate(-90)">21</text><text transform="translate(875.9 558.5) rotate(-90)">22</text><text transform="translate(875.9 664.5) rotate(-90)">22</text><text transform="translate(884.2 558.5) rotate(-90)">23</text><text transform="translate(884.2 664.5) rotate(-90)">23</text><text transform="translate(892.4 558.5) rotate(-90)">24</text><text transform="translate(892.4 664.5) rotate(-90)">24</text><text transform="translate(900.7 558.5) rotate(-90)">25</text><text transform="translate(900.7 664.5) rotate(-90)">25</text><text transform="translate(908.9 558.5) rotate(-90)">26</text><text transform="translate(908.9 664.5) rotate(-90)">26</text><text transform="translate(917.2 558.5) rotate(-90)">27</text><text transform="translate(917.2 664.5) rotate(-90)">27</text><text transform="translate(925.4 558.5) rotate(-90)">28</text><text transform="translate(925.4 664.5) rotate(-90)">28</text><text transform="translate(933.7 558.5) rotate(-90)">29</text><text transform="translate(933.7 664.5) rotate(-90)">29</text><text transform="translate(941.9 558.5) rotate(-90)">30</text><text transform="translate(941.9 664.5) rotate(-90)">30</text></g><g font-size="6" fill="#8a8a8a" font-family="Liberation Sans" text-anchor="middle"><text transform="translate(692.5 565.4) rotate(-90)">j</text><text transform="translate(950.5 565.4) rotate(-90)">j</text><text transform="translate(692.5 573.7) rotate(-90)">i</text><text transform="translate(950.5 573.7) rotate(-90)">i</text><text transform="translate(692.5 581.9) rotate(-90)">h</text><text transform="translate(950.5 581.9) rotate(-90)">h</text><text transform="translate(692.5 590.1) rotate(-90)">g</text><text transform="translate(950.5 590.1) rotate(-90)">g</text><text transform="translate(692.5 598.3) rotate(-90)">f</text><text transform="translate(950.5 598.3) rotate(-90)">f</text><text transform="translate(692.5 623.0) rotate(-90)">e</text><text transform="translate(950.5 623.0) rotate(-90)">e</text><text transform="translate(692.5 631.3) rotate(-90)">d</text><text transform="translate(950.5 631.3) rotate(-90)">d</text><text transform="translate(692.5 639.5) rotate(-90)">c</text><text transform="translate(950.5 639.5) rotate(-90)">c</text><text transform="translate(692.5 647.8) rotate(-90)">b</text><text transform="translate(950.5 647.8) rotate(-90)">b</text><text transform="translate(692.5 656.1) rotate(-90)">a</text><text transform="translate(950.5 656.1) rotate(-90)">a</text></g><g font-size="9" fill="#d33" font-family="Liberation Sans"><text x="687" y="546">+</text><text x="945" y="548">+</text><text x="687" y="696">+</text><text x="945" y="696">+</text></g><g fill="#777"><rect x="689.5" y="525.5" width="1" height="5"/><rect x="947.5" y="526" width="1" height="5"/><rect x="689.5" y="674" width="1" height="5"/><rect x="947.5" y="674" width="1" height="5"/></g><path d="M390.8 579 Q390.8 577 393 577 L600 577 L604.4 581 L604.4 620 L612 628 L612 732 L604.4 738 L604.4 749.7 L393 749.7 Q390.8 749.7 390.8 747.5 Z" fill="#2f6c9e"/><rect x="447" y="581.5" width="83" height="7.5" fill="#2b2b2b"/><rect x="534" y="581.5" width="67" height="7.5" fill="#2b2b2b"/><g fill="#555"><rect x="448.8" y="583.5" width="3.5" height="3.5"/><rect x="457.1" y="583.5" width="3.5" height="3.5"/><rect x="465.4" y="583.5" width="3.5" height="3.5"/><rect x="473.6" y="583.5" width="3.5" height="3.5"/><rect x="481.9" y="583.5" width="3.5" height="3.5"/><rect x="490.2" y="583.5" width="3.5" height="3.5"/><rect x="498.5" y="583.5" width="3.5" height="3.5"/><rect x="506.8" y="583.5" width="3.5" height="3.5"/><rect x="515.0" y="583.5" width="3.5" height="3.5"/><rect x="523.3" y="583.5" width="3.5" height="3.5"/><rect x="536.9" y="583.5" width="3.5" height="3.5"/><rect x="545.2" y="583.5" width="3.5" height="3.5"/><rect x="553.5" y="583.5" width="3.5" height="3.5"/><rect x="561.7" y="583.5" width="3.5" height="3.5"/><rect x="570.0" y="583.5" width="3.5" height="3.5"/><rect x="578.3" y="583.5" width="3.5" height="3.5"/><rect x="586.6" y="583.5" width="3.5" height="3.5"/><rect x="594.9" y="583.5" width="3.5" height="3.5"/></g><rect x="476.7" y="737.8" width="66.6" height="7.8" fill="#2b2b2b"/><rect x="550.6" y="737.8" width="50.4" height="7.8" fill="#2b2b2b"/><g font-size="5" fill="#dce7f0" font-family="Liberation Sans"><text text-anchor="end" transform="translate(469.8 592) rotate(-90)">AREF</text><text text-anchor="end" transform="translate(478.0 592) rotate(-90)">GND</text><text text-anchor="end" transform="translate(486.4 592) rotate(-90)">13</text><text text-anchor="end" transform="translate(494.6 592) rotate(-90)">12</text><text text-anchor="end" transform="translate(503.0 592) rotate(-90)">~11</text><text text-anchor="end" transform="translate(511.3 592) rotate(-90)">~10</text><text text-anchor="end" transform="translate(519.6 592) rotate(-90)">~9</text><text text-anchor="end" transform="translate(527.9 592) rotate(-90)">8</text><text text-anchor="end" transform="translate(540.6 592) rotate(-90)">7</text><text text-anchor="end" transform="translate(549.0 592) rotate(-90)">~6</text><text text-anchor="end" transform="translate(557.3 592) rotate(-90)">~5</text><text text-anchor="end" transform="translate(565.6 592) rotate(-90)">4</text><text text-anchor="end" transform="translate(574.0 592) rotate(-90)">~3</text><text text-anchor="end" transform="translate(582.0 592) rotate(-90)">2</text><text text-anchor="end" transform="translate(590.4 592) rotate(-90)">TX→1</text><text text-anchor="end" transform="translate(598.5 592) rotate(-90)">RX←0</text><text transform="translate(491.2 735.5) rotate(-90)">IOREF</text><text transform="translate(499.5 735.5) rotate(-90)">RESET</text><text transform="translate(507.8 735.5) rotate(-90)">3.3V</text><text transform="translate(516.1 735.5) rotate(-90)">5V</text><text transform="translate(524.4 735.5) rotate(-90)">GND</text><text transform="translate(532.7 735.5) rotate(-90)">GND</text><text transform="translate(541.0 735.5) rotate(-90)">Vin</text><text transform="translate(556.8 735.5) rotate(-90)">A0</text><text transform="translate(565.2 735.5) rotate(-90)">A1</text><text transform="translate(573.6 735.5) rotate(-90)">A2</text><text transform="translate(582.0 735.5) rotate(-90)">A3</text><text transform="translate(590.4 735.5) rotate(-90)">A4</text><text transform="translate(598.8 735.5) rotate(-90)">A5</text></g><rect x="481" y="609" width="120" height="1" fill="#8fb2cf"/><text x="527" y="607" font-size="7" font-weight="bold" fill="#dde8f0" font-family="Liberation Sans">DIGITAL (PWM ~)</text><rect x="398.3" y="582.2" width="25" height="21" rx="2" fill="#e6e6e6"/><circle cx="410.8" cy="592.8" r="5.5" fill="#b5452d"/><circle cx="439.4" cy="585.2" r="4.8" fill="#fff" stroke="#e0d6b8" stroke-width="1"/><circle cx="604.7" cy="634.4" r="4.8" fill="#fff" stroke="#e0d6b8" stroke-width="1"/><circle cx="604.7" cy="725.6" r="4.8" fill="#fff" stroke="#e0d6b8" stroke-width="1"/><circle cx="435.8" cy="742" r="4.8" fill="#fff" stroke="#e0d6b8" stroke-width="1"/><rect x="401" y="610" width="12" height="48" rx="5" fill="#dcdcdc"/><rect x="368.3" y="614" width="55" height="40" fill="#dddddd"/><path d="M296 615 Q294 613 298 613 L368.3 613 L368.3 654.5 L298 654.5 Q294 654.5 296 652.5 L293.6 648 L293.6 620 Z" fill="#2e2e2e"/><rect x="320" y="621" width="40" height="26" fill="#262626"/><path d="M326 634 H352 M333 634 L338 629 H342 M336 634 L340 638 H345" stroke="#111" stroke-width="1.1" fill="none"/><circle cx="352" cy="634" r="2" fill="#111"/><rect x="268" y="623.5" width="26" height="20.5" fill="#2e2e2e"/><rect x="270" y="624" width="4" height="19" rx="2" fill="#222"/><rect x="283" y="624" width="4" height="19" rx="2" fill="#222"/><g fill="#f3f4f6"><rect x="318.0" y="612.5" width="1.6" height="1.3"/><rect x="318.0" y="653.3" width="1.6" height="1.3"/><rect x="322.5" y="612.5" width="1.6" height="1.3"/><rect x="322.5" y="653.3" width="1.6" height="1.3"/><rect x="327.0" y="612.5" width="1.6" height="1.3"/><rect x="327.0" y="653.3" width="1.6" height="1.3"/><rect x="331.5" y="612.5" width="1.6" height="1.3"/><rect x="331.5" y="653.3" width="1.6" height="1.3"/><rect x="336.0" y="612.5" width="1.6" height="1.3"/><rect x="336.0" y="653.3" width="1.6" height="1.3"/><rect x="340.5" y="612.5" width="1.6" height="1.3"/><rect x="340.5" y="653.3" width="1.6" height="1.3"/><rect x="345.0" y="612.5" width="1.6" height="1.3"/><rect x="345.0" y="653.3" width="1.6" height="1.3"/></g><path d="M259 626 L272 626 L272 640.5 L259 640.5 Q251 640.5 251 633.2 Q251 626 259 626 Z" fill="#2e2e2e"/><path d="M261 629 L258 634 L261 634 L258 638" stroke="#e8c91a" stroke-width="1.3" fill="none"/><rect x="431.7" y="658.6" width="38.3" height="14.7" rx="7.3" fill="#d5d5d5" stroke="#c0c0c0"/><rect x="445" y="630" width="17.2" height="17.5" fill="#2f3338"/><rect x="446" y="681" width="10" height="10" fill="#2f3338"/><rect x="407" y="685" width="12" height="22" fill="#2f3338"/><rect x="403" y="690" width="5" height="10" fill="#ddd"/><g fill="#ddd"><rect x="419" y="687" width="5" height="3.5"/><rect x="419" y="694" width="5" height="3.5"/><rect x="419" y="701" width="5" height="3.5"/></g><rect x="456" y="698" width="8" height="10" fill="#2f3338"/><rect x="480.3" y="683.6" width="120.7" height="29.2" fill="#353535"/><g fill="#e0e0e0"><rect x="484.0" y="684.6" width="3" height="1.5"/><rect x="484.0" y="710.5" width="3" height="1.5"/><rect x="492.3" y="684.6" width="3" height="1.5"/><rect x="492.3" y="710.5" width="3" height="1.5"/><rect x="500.6" y="684.6" width="3" height="1.5"/><rect x="500.6" y="710.5" width="3" height="1.5"/><rect x="508.9" y="684.6" width="3" height="1.5"/><rect x="508.9" y="710.5" width="3" height="1.5"/><rect x="517.2" y="684.6" width="3" height="1.5"/><rect x="517.2" y="710.5" width="3" height="1.5"/><rect x="525.5" y="684.6" width="3" height="1.5"/><rect x="525.5" y="710.5" width="3" height="1.5"/><rect x="533.8" y="684.6" width="3" height="1.5"/><rect x="533.8" y="710.5" width="3" height="1.5"/><rect x="542.1" y="684.6" width="3" height="1.5"/><rect x="542.1" y="710.5" width="3" height="1.5"/><rect x="550.4" y="684.6" width="3" height="1.5"/><rect x="550.4" y="710.5" width="3" height="1.5"/><rect x="558.7" y="684.6" width="3" height="1.5"/><rect x="558.7" y="710.5" width="3" height="1.5"/><rect x="567.0" y="684.6" width="3" height="1.5"/><rect x="567.0" y="710.5" width="3" height="1.5"/><rect x="575.3" y="684.6" width="3" height="1.5"/><rect x="575.3" y="710.5" width="3" height="1.5"/><rect x="583.6" y="684.6" width="3" height="1.5"/><rect x="583.6" y="710.5" width="3" height="1.5"/><rect x="591.9" y="684.6" width="3" height="1.5"/><rect x="591.9" y="710.5" width="3" height="1.5"/></g><circle cx="497" cy="698" r="2.4" fill="#222"/><circle cx="584" cy="698" r="2.4" fill="#222"/><rect x="381.7" y="711.4" width="45.8" height="33.3" rx="2" fill="#262626"/><rect x="390" y="713" width="37" height="28" rx="5" fill="#333"/><circle cx="445.0" cy="725" r="10" fill="#26577f"/><circle cx="445.0" cy="723.3" r="10" fill="#dcdcdc"/><path d="M437.3 726 A8.3 8.3 0 0 0 452.7 726 Z" fill="#3a3a3a"/><circle cx="469.2" cy="725" r="10" fill="#26577f"/><circle cx="469.2" cy="723.3" r="10" fill="#dcdcdc"/><path d="M461.5 726 A8.3 8.3 0 0 0 476.9 726 Z" fill="#3a3a3a"/><g stroke="#fff" stroke-width="3" fill="none"><circle cx="503.5" cy="624" r="8"/><circle cx="521.5" cy="624" r="8"/></g><path d="M499.5 624 h8 M517.5 624 h8 M521.5 620 v8" stroke="#fff" stroke-width="1.8"/><text x="493" y="641" font-size="8" font-weight="bold" fill="#fff" font-family="Liberation Sans">ARDUINO</text><rect x="536" y="614" width="38" height="20" rx="10" fill="none" stroke="#3d7bab" stroke-width="1"/><text x="541" y="630" font-size="14" fill="#fff" font-family="Liberation Sans">UNO</text><g fill="#e8e8e8"><rect x="477" y="615" width="8" height="3"/><rect x="477" y="631" width="8" height="3"/><rect x="477" y="639" width="8" height="3"/><rect x="577" y="631.5" width="9" height="3"/></g><rect x="579.5" y="631.5" width="4" height="3" fill="#43e36b"/><g font-size="5" fill="#dce7f0" font-family="Liberation Sans" text-anchor="end"><text x="474.5" y="618.5">L</text><text x="475" y="634.5">TX</text><text x="475" y="642.5">RX</text></g><text x="589.5" y="634.5" font-size="5" fill="#dce7f0" font-family="Liberation Sans">ON</text><text x="519" y="720.5" font-size="5.8" font-weight="bold" fill="#dde8f0" font-family="Liberation Sans">POWER</text><text x="562" y="720.5" font-size="5.8" font-weight="bold" fill="#dde8f0" font-family="Liberation Sans">ANALOG IN</text><rect x="501" y="715.5" width="40" height="0.8" fill="#8fb2cf"/><rect x="550" y="715.5" width="50" height="0.8" fill="#8fb2cf"/><g><path d="M808.0 587.0 L808.0 347.6 Q808.0 339.6 816.0 339.6 L926.2 339.6 Q934.2 339.6 934.2 347.6 L934.2 376.0" stroke="#1a92d2" stroke-width="2.6" fill="none" stroke-linecap="round" stroke-linejoin="round"/><path d="M484.4 589.0 L484.4 337.2 Q484.4 329.2 492.4 329.2 L1000.3 329.2 Q1008.3 329.2 1008.3 337.2 L1008.3 376.0" stroke="#e3222a" stroke-width="2.6" fill="none" stroke-linecap="round" stroke-linejoin="round"/><path d="M492.5 589.0 L492.5 358.0 Q492.5 350.0 500.5 350.0 L935.0 350.0 Q943.0 350.0 943.0 358.0 L943.0 376.0" stroke="#f08a1d" stroke-width="2.6" fill="none" stroke-linecap="round" stroke-linejoin="round"/><path d="M501.3 589.0 L501.3 451.0 Q501.3 443.0 509.3 443.0 L792.0 443.0 Q800.0 443.0 800.0 451.0 L800.0 565.0" stroke="#6cc4d4" stroke-width="2.6" fill="none" stroke-linecap="round" stroke-linejoin="round"/><path d="M509.2 589.0 L509.2 353.6 Q509.2 345.6 517.2 345.6 L951.3 345.6 Q959.3 345.6 959.3 353.6 L959.3 376.0" stroke="#f5d20c" stroke-width="2.6" fill="none" stroke-linecap="round" stroke-linejoin="round"/><path d="M517.3 589.0 L517.3 348.8 Q517.3 340.8 525.3 340.8 L992.5 340.8 Q1000.5 340.8 1000.5 348.8 L1000.5 376.0" stroke="#f5d20c" stroke-width="2.6" fill="none" stroke-linecap="round" stroke-linejoin="round"/><path d="M525.5 589.0 L525.5 493.0 Q525.5 485.0 533.5 485.0 L807.5 485.0 Q815.5 485.0 815.5 493.0 L815.5 565.0" stroke="#39b44a" stroke-width="2.6" fill="none" stroke-linecap="round" stroke-linejoin="round"/><path d="M538.7 589.0 L538.7 324.2 Q538.7 316.2 546.7 316.3 L1017.0 319.2 Q1025.0 319.3 1025.0 327.3 L1025.0 376.0" stroke="#e3222a" stroke-width="2.6" fill="none" stroke-linecap="round" stroke-linejoin="round"/><path d="M547.0 589.0 L547.0 351.3 Q547.0 343.3 555.0 343.3 L1009.0 343.3 Q1017.0 343.3 1017.0 351.3 L1017.0 376.0" stroke="#e3222a" stroke-width="2.6" fill="none" stroke-linecap="round" stroke-linejoin="round"/><path d="M555.3 589.0 L555.3 522.0 Q555.3 514.0 563.3 514.0 L701.4 514.0 Q709.4 514.0 709.4 506.0 L709.4 494.0" stroke="#39b44a" stroke-width="2.6" fill="none" stroke-linecap="round" stroke-linejoin="round"/><path d="M563.6 589.0 L563.6 550.7 Q563.6 542.7 571.6 542.7 L649.0 542.7 Q657.0 542.7 657.0 550.7 L657.0 564.2 Q657.0 572.2 665.0 572.2 L742.0 572.2" stroke="#e3222a" stroke-width="2.6" fill="none" stroke-linecap="round" stroke-linejoin="round"/><path d="M572.0 589.0 L572.0 560.0 Q572.0 552.0 580.0 552.0 L641.7 552.0 Q649.7 552.0 649.7 560.0 L649.7 833.7 Q649.7 841.7 657.7 841.7 L760.0 841.7" stroke="#39b44a" stroke-width="2.6" fill="none" stroke-linecap="round" stroke-linejoin="round"/><path d="M580.0 589.0 L580.0 567.8 Q580.0 559.8 588.0 559.8 L638.5 559.8 Q646.5 559.8 646.5 567.8 L646.5 742.8 Q646.5 750.8 654.5 750.8 L1003.9 750.8 Q1008.5 750.8 1008.5 755.4 L1008.5 760.0" stroke="#6cc4d4" stroke-width="2.6" fill="none" stroke-linecap="round" stroke-linejoin="round"/><path d="M580.0 589.0 L580.0 571.0 Q580.0 563.0 588.0 563.0 L634.0 563.0 Q642.0 563.0 642.0 571.0 L642.0 753.3 Q642.0 761.3 650.0 761.3 L898.0 761.3" stroke="#6cc4d4" stroke-width="2.6" fill="none" stroke-linecap="round" stroke-linejoin="round"/><path d="M596.0 589.0 L596.0 536.8 Q596.0 528.8 604.0 528.8 L656.0 528.8 Q664.0 528.8 664.0 536.8 L664.0 572.4 Q664.0 580.4 672.0 580.4 L759.0 580.4" stroke="#333333" stroke-width="2.6" fill="none" stroke-linecap="round" stroke-linejoin="round"/><path d="M882.0 539.3 L882.0 363.0 Q882.0 355.0 890.0 355.0 L917.8 355.0 Q925.8 355.0 925.8 363.0 L925.8 376.0" stroke="#e3222a" stroke-width="2.6" fill="none" stroke-linecap="round" stroke-linejoin="round"/><path d="M865.5 531.2 L865.5 364.0 Q865.5 356.0 873.5 356.0 L943.0 356.0 Q951.0 356.0 951.0 364.0 L951.0 376.0" stroke="#333333" stroke-width="2.6" fill="none" stroke-linecap="round" stroke-linejoin="round"/><path d="M890.3 531.2 L890.3 375.4 Q890.3 367.4 898.3 367.4 L913.5 367.4 Q917.8 367.4 917.8 371.7 L917.8 376.0" stroke="#333333" stroke-width="2.6" fill="none" stroke-linecap="round" stroke-linejoin="round"/><path d="M1033.5 376.0 L1033.5 358.0 Q1033.5 350.0 1041.5 350.0 L1166.0 350.0 Q1174.0 350.0 1174.0 358.0 L1174.0 588.7 Q1174.0 596.7 1166.0 596.7 L923.0 596.7" stroke="#e3222a" stroke-width="2.6" fill="none" stroke-linecap="round" stroke-linejoin="round"/><path d="M1041.8 376.0 L1041.8 368.2 Q1041.8 360.5 1049.5 360.5 L1186.0 360.5 Q1194.0 360.5 1194.0 368.5 L1194.0 523.0 Q1194.0 531.0 1186.0 531.0 L939.6 531.0" stroke="#333333" stroke-width="2.6" fill="none" stroke-linecap="round" stroke-linejoin="round"/><path d="M513.6 742.0 L513.6 806.2 Q513.6 814.2 521.6 814.2 L742.8 814.2 Q750.8 814.2 750.8 806.2 L750.8 687.2" stroke="#e3222a" stroke-width="2.6" fill="none" stroke-linecap="round" stroke-linejoin="round"/><path d="M520.0 742.0 L520.0 777.5 Q520.0 785.5 528.0 785.5 L648.7 785.5 Q656.7 785.5 656.7 777.5 L656.7 687.0 Q656.7 679.0 664.7 679.0 L700.9 679.0" stroke="#333333" stroke-width="2.6" fill="none" stroke-linecap="round" stroke-linejoin="round"/><path d="M596.5 742.0 L596.5 949.0 Q596.5 957.0 604.5 957.0 L834.0 957.0" stroke="#39b44a" stroke-width="2.6" fill="none" stroke-linecap="round" stroke-linejoin="round"/><path d="M709.0 679.0 L709.0 850.3 Q709.0 858.3 717.0 858.3 L760.0 858.3" stroke="#333333" stroke-width="2.6" fill="none" stroke-linecap="round" stroke-linejoin="round"/><path d="M717.5 687.2 L717.5 940.7 Q717.5 948.7 725.5 948.7 L834.0 948.7" stroke="#e3222a" stroke-width="2.6" fill="none" stroke-linecap="round" stroke-linejoin="round"/><path d="M725.7 679.0 L728.9 927.0 Q729.0 935.0 729.0 943.0 L729.0 957.0 Q729.0 965.0 737.0 965.0 L834.0 965.0" stroke="#333333" stroke-width="2.6" fill="none" stroke-linecap="round" stroke-linejoin="round"/><path d="M742.0 687.2 L742.0 842.0 Q742.0 850.0 750.0 850.0 L760.0 850.0" stroke="#e3222a" stroke-width="2.6" fill="none" stroke-linecap="round" stroke-linejoin="round"/><path d="M898.9 679.0 L901.5 758.0" stroke="#333333" stroke-width="2.6" fill="none" stroke-linecap="round" stroke-linejoin="round"/><path d="M906.9 687.2 L910.0 758.0" stroke="#e3222a" stroke-width="2.6" fill="none" stroke-linecap="round" stroke-linejoin="round"/><path d="M939.6 679.0 L941.8 680.5 Q944.0 682.0 946.7 682.0 L981.4 682.0 Q988.0 682.0 992.2 687.0 L992.2 687.0 Q996.5 692.0 996.5 698.6 L996.5 760.0" stroke="#333333" stroke-width="2.6" fill="none" stroke-linecap="round" stroke-linejoin="round"/><path d="M939.6 687.2 L996.5 687.2 Q1004.5 687.2 1004.5 695.2 L1004.5 760.0" stroke="#e3222a" stroke-width="2.6" fill="none" stroke-linecap="round" stroke-linejoin="round"/><path d="M717.5 531.2 L717.5 679.0" stroke="#333333" stroke-width="2.6" fill="none" stroke-linecap="round" stroke-linejoin="round"/><path d="M750.4 500.0 L750.4 531.2" stroke="#333333" stroke-width="2.6" fill="none" stroke-linecap="round" stroke-linejoin="round"/><path d="M766.6 580.4 L817.4 580.4" stroke="#39b44a" stroke-width="2.6" fill="none" stroke-linecap="round" stroke-linejoin="round"/><path d="M826.7 596.8 L842.4 596.8" stroke="#6cc4d4" stroke-width="2.6" fill="none" stroke-linecap="round" stroke-linejoin="round"/><path d="M849.0 596.8 L849.0 679.0" stroke="#333333" stroke-width="2.6" fill="none" stroke-linecap="round" stroke-linejoin="round"/><path d="M857.2 596.8 L857.2 687.2" stroke="#e3222a" stroke-width="2.6" fill="none" stroke-linecap="round" stroke-linejoin="round"/><path d="M799.8 638.0 L799.8 687.2" stroke="#e3222a" stroke-width="2.6" fill="none" stroke-linecap="round" stroke-linejoin="round"/><path d="M816.5 646.3 L816.5 679.0" stroke="#333333" stroke-width="2.6" fill="none" stroke-linecap="round" stroke-linejoin="round"/><path d="M750.4 654.6 L750.4 679.0" stroke="#333333" stroke-width="2.6" fill="none" stroke-linecap="round" stroke-linejoin="round"/><path d="M808.0 620.0 L808.0 638.0" stroke="#1a92d2" stroke-width="2.6" fill="none" stroke-linecap="round" stroke-linejoin="round"/><path d="M915.2 539.3 L915.2 687.2" stroke="#e3222a" stroke-width="2.6" fill="none" stroke-linecap="round" stroke-linejoin="round"/></g><rect x="708.5" y="487" width="1.6" height="9" fill="#888"/><rect x="749.6" y="487" width="1.6" height="14" fill="#888"/><circle cx="730" cy="459.6" r="34.8" fill="#333333"/><circle cx="730" cy="459.6" r="6" fill="#a8812f"/><g stroke="#8a8a8a" stroke-width="1" fill="none"><path d="M751 554 L742 563.9"/><path d="M754 554 L750.4 563.9"/><path d="M757 554 L758.7 563.9"/><path d="M759 554 L766.6 563.9"/></g><path d="M749 542 Q749 536.8 754.8 536.8 Q760.5 536.8 760.5 542 L760.5 551 Q762 553 760.5 554.8 L749 554.8 Z" fill="#2ee36c"/><rect x="922.2" y="538.0" width="1.5" height="36.0" fill="#999"/><path d="M919.0 547.0 Q923.0 543.0 927.0 547.0 L926.0 565.0 Q927.0 565.0 927.0 565.5 Q923.0 569.0 919.0 565.5 L920.0 547.0 Q919.0 547.0 919.0 547.0 Z" fill="#e0bd7c"/><rect x="919.0" y="548.0" width="8" height="1.6" fill="#c9a13e"/><rect x="919.5" y="552.5" width="7" height="2.4" fill="#8a4b12"/><rect x="919.5" y="557.0" width="7" height="2.4" fill="#ee1c1c"/><rect x="919.0" y="561.5" width="8" height="2.4" fill="#ee1c1c"/><rect x="749.6" y="588.0" width="1.5" height="35.0" fill="#999"/><path d="M746.4 596.5 Q750.4 592.5 754.4 596.5 L753.4 614.5 Q754.4 614.5 754.4 615.0 Q750.4 618.5 746.4 615.0 L747.4 596.5 Q746.4 596.5 746.4 596.5 Z" fill="#e0bd7c"/><rect x="746.4" y="597.5" width="8" height="1.6" fill="#c9a13e"/><rect x="746.9" y="602.0" width="7" height="2.4" fill="#8a4b12"/><rect x="746.9" y="606.5" width="7" height="2.4" fill="#ee1c1c"/><rect x="746.4" y="611.0" width="8" height="2.4" fill="#ee1c1c"/><g stroke="#9a9a9a" stroke-width="1.2"><path d="M799.8 618 V629.8"/><path d="M808 618 V629.8"/><path d="M816.2 618 V629.8"/></g><circle cx="808" cy="605.4" r="19.4" fill="#233c52"/><circle cx="808" cy="605.4" r="13" fill="#6a9fd3"/><path d="M810 608 L821 616" stroke="#1e3346" stroke-width="3.5" stroke-linecap="round"/><g fill="#6e8aa3"><circle cx="824.5" cy="605.4" r="0.9"/><circle cx="819.7" cy="617.1" r="0.9"/><circle cx="808.0" cy="621.9" r="0.9"/><circle cx="796.3" cy="617.1" r="0.9"/><circle cx="791.5" cy="605.4" r="0.9"/><circle cx="796.3" cy="593.7" r="0.9"/><circle cx="808.0" cy="588.9" r="0.9"/><circle cx="819.7" cy="593.7" r="0.9"/></g><g stroke="#8a8a8a" stroke-width="1" fill="none"><path d="M845 555 L841 563.9"/><path d="M849 555 L849 563.9"/><path d="M853 555 L857 563.9"/></g><rect x="839.3" y="533" width="19.7" height="23.3" rx="2" fill="#2b2b2b"/><circle cx="849" cy="545" r="5" fill="#444"/><rect x="895.3" y="371.4" width="259" height="116.4" fill="#4fa36a"/><circle cx="902.2" cy="378.6" r="4.2" fill="#fff"/><circle cx="1146.7" cy="378.6" r="4.2" fill="#fff"/><circle cx="902.2" cy="480.5" r="4.2" fill="#fff"/><circle cx="1146.7" cy="480.5" r="4.2" fill="#fff"/><circle cx="917.9" cy="375.8" r="2.7" fill="#f1e4b3"/><circle cx="917.9" cy="375.8" r="1.5" fill="#333"/><rect x="917.1" y="381" width="1.6" height="6" fill="#b9d9c1"/><circle cx="926.2" cy="375.8" r="2.7" fill="#f1e4b3"/><circle cx="926.2" cy="375.8" r="1.5" fill="#e3222a"/><rect x="925.4" y="381" width="1.6" height="6" fill="#b9d9c1"/><circle cx="934.4" cy="375.8" r="2.7" fill="#f1e4b3"/><circle cx="934.4" cy="375.8" r="1.5" fill="#1a92d2"/><rect x="933.6" y="381" width="1.6" height="6" fill="#b9d9c1"/><circle cx="942.7" cy="375.8" r="2.7" fill="#f1e4b3"/><circle cx="942.7" cy="375.8" r="1.5" fill="#f08a1d"/><rect x="941.9" y="381" width="1.6" height="6" fill="#b9d9c1"/><circle cx="951.0" cy="375.8" r="2.7" fill="#f1e4b3"/><circle cx="951.0" cy="375.8" r="1.5" fill="#333"/><rect x="950.2" y="381" width="1.6" height="6" fill="#b9d9c1"/><circle cx="959.2" cy="375.8" r="2.7" fill="#f1e4b3"/><circle cx="959.2" cy="375.8" r="1.5" fill="#f5d20c"/><rect x="958.5" y="381" width="1.6" height="6" fill="#b9d9c1"/><circle cx="967.5" cy="375.8" r="2.7" fill="#f1e4b3"/><circle cx="967.5" cy="375.8" r="1.5" fill="#fff"/><rect x="966.7" y="381" width="1.6" height="6" fill="#b9d9c1"/><circle cx="975.8" cy="375.8" r="2.7" fill="#f1e4b3"/><circle cx="975.8" cy="375.8" r="1.5" fill="#fff"/><rect x="975.0" y="381" width="1.6" height="6" fill="#b9d9c1"/><circle cx="984.1" cy="375.8" r="2.7" fill="#f1e4b3"/><circle cx="984.1" cy="375.8" r="1.5" fill="#fff"/><rect x="983.3" y="381" width="1.6" height="6" fill="#b9d9c1"/><circle cx="992.3" cy="375.8" r="2.7" fill="#f1e4b3"/><circle cx="992.3" cy="375.8" r="1.5" fill="#fff"/><rect x="991.5" y="381" width="1.6" height="6" fill="#b9d9c1"/><circle cx="1000.6" cy="375.8" r="2.7" fill="#f1e4b3"/><circle cx="1000.6" cy="375.8" r="1.5" fill="#f5d20c"/><rect x="999.8" y="381" width="1.6" height="6" fill="#b9d9c1"/><circle cx="1008.9" cy="375.8" r="2.7" fill="#f1e4b3"/><circle cx="1008.9" cy="375.8" r="1.5" fill="#e3222a"/><rect x="1008.1" y="381" width="1.6" height="6" fill="#b9d9c1"/><circle cx="1017.1" cy="375.8" r="2.7" fill="#f1e4b3"/><circle cx="1017.1" cy="375.8" r="1.5" fill="#e3222a"/><rect x="1016.3" y="381" width="1.6" height="6" fill="#b9d9c1"/><circle cx="1025.4" cy="375.8" r="2.7" fill="#f1e4b3"/><circle cx="1025.4" cy="375.8" r="1.5" fill="#e3222a"/><rect x="1024.6" y="381" width="1.6" height="6" fill="#b9d9c1"/><circle cx="1033.7" cy="375.8" r="2.7" fill="#f1e4b3"/><circle cx="1033.7" cy="375.8" r="1.5" fill="#e3222a"/><rect x="1032.9" y="381" width="1.6" height="6" fill="#b9d9c1"/><circle cx="1042.0" cy="375.8" r="2.7" fill="#f1e4b3"/><circle cx="1042.0" cy="375.8" r="1.5" fill="#333"/><rect x="1041.2" y="381" width="1.6" height="6" fill="#b9d9c1"/><rect x="909.2" y="388.9" width="231.1" height="81.1" fill="#333333"/><rect x="909.2" y="470" width="231.1" height="2" fill="#3e8f58"/><rect x="917.5" y="403.6" width="214.5" height="52" fill="#3b5fae"/><rect x="933.30" y="410.8" width="9.6" height="17.4" fill="#3356a5"/><rect x="944.75" y="410.8" width="9.6" height="17.4" fill="#3356a5"/><rect x="956.20" y="410.8" width="9.6" height="17.4" fill="#3356a5"/><rect x="967.65" y="410.8" width="9.6" height="17.4" fill="#3356a5"/><rect x="979.10" y="410.8" width="9.6" height="17.4" fill="#3356a5"/><rect x="990.55" y="410.8" width="9.6" height="17.4" fill="#3356a5"/><rect x="1002.00" y="410.8" width="9.6" height="17.4" fill="#3356a5"/><rect x="1013.45" y="410.8" width="9.6" height="17.4" fill="#3356a5"/><rect x="1024.90" y="410.8" width="9.6" height="17.4" fill="#3356a5"/><rect x="1036.35" y="410.8" width="9.6" height="17.4" fill="#3356a5"/><rect x="1047.80" y="410.8" width="9.6" height="17.4" fill="#3356a5"/><rect x="1059.25" y="410.8" width="9.6" height="17.4" fill="#3356a5"/><rect x="1070.70" y="410.8" width="9.6" height="17.4" fill="#3356a5"/><rect x="1082.15" y="410.8" width="9.6" height="17.4" fill="#3356a5"/><rect x="1093.60" y="410.8" width="9.6" height="17.4" fill="#3356a5"/><rect x="1105.05" y="410.8" width="9.6" height="17.4" fill="#3356a5"/><rect x="933.30" y="429.9" width="9.6" height="17.4" fill="#3356a5"/><rect x="944.75" y="429.9" width="9.6" height="17.4" fill="#3356a5"/><rect x="956.20" y="429.9" width="9.6" height="17.4" fill="#3356a5"/><rect x="967.65" y="429.9" width="9.6" height="17.4" fill="#3356a5"/><rect x="979.10" y="429.9" width="9.6" height="17.4" fill="#3356a5"/><rect x="990.55" y="429.9" width="9.6" height="17.4" fill="#3356a5"/><rect x="1002.00" y="429.9" width="9.6" height="17.4" fill="#3356a5"/><rect x="1013.45" y="429.9" width="9.6" height="17.4" fill="#3356a5"/><rect x="1024.90" y="429.9" width="9.6" height="17.4" fill="#3356a5"/><rect x="1036.35" y="429.9" width="9.6" height="17.4" fill="#3356a5"/><rect x="1047.80" y="429.9" width="9.6" height="17.4" fill="#3356a5"/><rect x="1059.25" y="429.9" width="9.6" height="17.4" fill="#3356a5"/><rect x="1070.70" y="429.9" width="9.6" height="17.4" fill="#3356a5"/><rect x="1082.15" y="429.9" width="9.6" height="17.4" fill="#3356a5"/><rect x="1093.60" y="429.9" width="9.6" height="17.4" fill="#3356a5"/><rect x="1105.05" y="429.9" width="9.6" height="17.4" fill="#3356a5"/><g fill="#e6ebf6"><rect x="990.55" y="410.80" width="1.9" height="2.45"/><rect x="998.35" y="410.80" width="1.9" height="2.45"/><rect x="990.55" y="413.30" width="1.9" height="2.45"/><rect x="998.35" y="413.30" width="1.9" height="2.45"/><rect x="990.55" y="415.80" width="1.9" height="2.45"/><rect x="998.35" y="415.80" width="1.9" height="2.45"/><rect x="990.55" y="418.30" width="1.9" height="2.45"/><rect x="994.45" y="418.30" width="1.9" height="2.45"/><rect x="998.35" y="418.30" width="1.9" height="2.45"/><rect x="990.55" y="420.80" width="1.9" height="2.45"/><rect x="994.45" y="420.80" width="1.9" height="2.45"/><rect x="998.35" y="420.80" width="1.9" height="2.45"/><rect x="990.55" y="423.30" width="1.9" height="2.45"/><rect x="994.45" y="423.30" width="1.9" height="2.45"/><rect x="998.35" y="423.30" width="1.9" height="2.45"/><rect x="992.50" y="425.80" width="1.9" height="2.45"/><rect x="996.40" y="425.80" width="1.9" height="2.45"/><rect x="1003.95" y="415.80" width="1.9" height="2.45"/><rect x="1005.90" y="415.80" width="1.9" height="2.45"/><rect x="1007.85" y="415.80" width="1.9" height="2.45"/><rect x="1002.00" y="418.30" width="1.9" height="2.45"/><rect x="1009.80" y="418.30" width="1.9" height="2.45"/><rect x="1002.00" y="420.80" width="1.9" height="2.45"/><rect x="1003.95" y="420.80" width="1.9" height="2.45"/><rect x="1005.90" y="420.80" width="1.9" height="2.45"/><rect x="1007.85" y="420.80" width="1.9" height="2.45"/><rect x="1009.80" y="420.80" width="1.9" height="2.45"/><rect x="1002.00" y="423.30" width="1.9" height="2.45"/><rect x="1003.95" y="425.80" width="1.9" height="2.45"/><rect x="1005.90" y="425.80" width="1.9" height="2.45"/><rect x="1007.85" y="425.80" width="1.9" height="2.45"/><rect x="1015.40" y="410.80" width="1.9" height="2.45"/><rect x="1017.35" y="410.80" width="1.9" height="2.45"/><rect x="1017.35" y="413.30" width="1.9" height="2.45"/><rect x="1017.35" y="415.80" width="1.9" height="2.45"/><rect x="1017.35" y="418.30" width="1.9" height="2.45"/><rect x="1017.35" y="420.80" width="1.9" height="2.45"/><rect x="1017.35" y="423.30" width="1.9" height="2.45"/><rect x="1015.40" y="425.80" width="1.9" height="2.45"/><rect x="1017.35" y="425.80" width="1.9" height="2.45"/><rect x="1019.30" y="425.80" width="1.9" height="2.45"/><rect x="1026.85" y="415.80" width="1.9" height="2.45"/><rect x="1028.80" y="415.80" width="1.9" height="2.45"/><rect x="1030.75" y="415.80" width="1.9" height="2.45"/><rect x="1024.90" y="418.30" width="1.9" height="2.45"/><rect x="1024.90" y="420.80" width="1.9" height="2.45"/><rect x="1024.90" y="423.30" width="1.9" height="2.45"/><rect x="1032.70" y="423.30" width="1.9" height="2.45"/><rect x="1026.85" y="425.80" width="1.9" height="2.45"/><rect x="1028.80" y="425.80" width="1.9" height="2.45"/><rect x="1030.75" y="425.80" width="1.9" height="2.45"/><rect x="1038.30" y="415.80" width="1.9" height="2.45"/><rect x="1040.25" y="415.80" width="1.9" height="2.45"/><rect x="1042.20" y="415.80" width="1.9" height="2.45"/><rect x="1036.35" y="418.30" width="1.9" height="2.45"/><rect x="1044.15" y="418.30" width="1.9" height="2.45"/><rect x="1036.35" y="420.80" width="1.9" height="2.45"/><rect x="1044.15" y="420.80" width="1.9" height="2.45"/><rect x="1036.35" y="423.30" width="1.9" height="2.45"/><rect x="1044.15" y="423.30" width="1.9" height="2.45"/><rect x="1038.30" y="425.80" width="1.9" height="2.45"/><rect x="1040.25" y="425.80" width="1.9" height="2.45"/><rect x="1042.20" y="425.80" width="1.9" height="2.45"/><rect x="1047.80" y="415.80" width="1.9" height="2.45"/><rect x="1049.75" y="415.80" width="1.9" height="2.45"/><rect x="1053.65" y="415.80" width="1.9" height="2.45"/><rect x="1047.80" y="418.30" width="1.9" height="2.45"/><rect x="1051.70" y="418.30" width="1.9" height="2.45"/><rect x="1055.60" y="418.30" width="1.9" height="2.45"/><rect x="1047.80" y="420.80" width="1.9" height="2.45"/><rect x="1051.70" y="420.80" width="1.9" height="2.45"/><rect x="1055.60" y="420.80" width="1.9" height="2.45"/><rect x="1047.80" y="423.30" width="1.9" height="2.45"/><rect x="1055.60" y="423.30" width="1.9" height="2.45"/><rect x="1047.80" y="425.80" width="1.9" height="2.45"/><rect x="1055.60" y="425.80" width="1.9" height="2.45"/><rect x="1061.20" y="415.80" width="1.9" height="2.45"/><rect x="1063.15" y="415.80" width="1.9" height="2.45"/><rect x="1065.10" y="415.80" width="1.9" height="2.45"/><rect x="1059.25" y="418.30" width="1.9" height="2.45"/><rect x="1067.05" y="418.30" width="1.9" height="2.45"/><rect x="1059.25" y="420.80" width="1.9" height="2.45"/><rect x="1061.20" y="420.80" width="1.9" height="2.45"/><rect x="1063.15" y="420.80" width="1.9" height="2.45"/><rect x="1065.10" y="420.80" width="1.9" height="2.45"/><rect x="1067.05" y="420.80" width="1.9" height="2.45"/><rect x="1059.25" y="423.30" width="1.9" height="2.45"/><rect x="1061.20" y="425.80" width="1.9" height="2.45"/><rect x="1063.15" y="425.80" width="1.9" height="2.45"/><rect x="1065.10" y="425.80" width="1.9" height="2.45"/></g><g stroke="#9a9a9a" stroke-width="1.6"><path d="M758 841.7 H773"/><path d="M758 850 H773"/><path d="M758 858.3 H773"/></g><rect x="774.7" y="791.7" width="82" height="116.6" fill="#0b6a14" stroke="#2f7fd0" stroke-width="1"/><rect x="771.5" y="837.5" width="3.5" height="25" fill="#222"/><rect x="778" y="811.7" width="75.3" height="76.6" rx="2" fill="#dfeadc"/><circle cx="815.4" cy="849.2" r="37.5" fill="#c9cec9"/><circle cx="818" cy="849.2" r="35" fill="#ebebeb"/><circle cx="818" cy="849.2" r="34" fill="none" stroke="#f7f7f7" stroke-width="1.5"/><circle cx="818" cy="849.2" r="26" fill="none" stroke="#dcdcdc" stroke-width="0.8"/><circle cx="818" cy="849.2" r="9" fill="#dadada"/><ellipse cx="818" cy="829" rx="8" ry="9" fill="#f2c2c4"/><ellipse cx="818" cy="870" rx="8" ry="9" fill="#f2c2c4"/><path d="M818 820 V838 M818 861 V879" stroke="#e79a9e" stroke-width="0.8"/><circle cx="815.8" cy="801.7" r="5.5" fill="#ddd"/><circle cx="815.8" cy="801.7" r="3" fill="#3b8fd6"/><circle cx="815.8" cy="898.3" r="5.5" fill="#ddd"/><circle cx="815.8" cy="898.3" r="3" fill="#3b8fd6"/><g fill="#ccc"><circle cx="833" cy="800.5" r="2.2"/><circle cx="839.5" cy="800.5" r="2.2"/><circle cx="846" cy="800.5" r="2.2"/></g><g font-size="5.5" fill="#cfe0cf" font-family="Liberation Sans" font-weight="bold"><text transform="translate(805 799) rotate(180)">Parallax</text><text transform="translate(805 896.5) rotate(180)">555-28027</text><text transform="translate(853 902) rotate(180)">PIR Sensor</text><text transform="translate(847 895.5) rotate(180)">Rev B</text></g><path d="M815 849 L942 838" stroke="#8fb9d3" stroke-width="1.3" stroke-dasharray="6 5" fill="none"/><rect x="984.2" y="802.5" width="40" height="105" rx="2" fill="#2b86c6" stroke="#1f6198" stroke-width="1"/><rect x="986.2" y="819.5" width="36" height="73" rx="3" fill="#2c84c4" stroke="#22689f" stroke-width="1"/><g fill="#3a93d4"><rect x="987.2" y="805.5" width="10" height="12"/><rect x="1011.2" y="805.5" width="10" height="12"/><rect x="987.2" y="893.5" width="10" height="12"/><rect x="1011.2" y="893.5" width="10" height="12"/></g><circle cx="1004.2" cy="842.5" r="15" fill="#1f6aa6"/><circle cx="1004.2" cy="842.5" r="13" fill="#5aa6e6"/><circle cx="1008.2" cy="860.5" r="11" fill="#62aee9"/><circle cx="1004.2" cy="899.5" r="5.5" fill="#f3f4f6"/><rect x="1001.7" y="901.5" width="5" height="7" fill="#f3f4f6"/><path d="M998.0 785.0 L1003.0 804.0" stroke="#6b3a1e" stroke-width="2.2"/><path d="M1004.0 785.0 L1006.0 804.0" stroke="#c9181d" stroke-width="2.2"/><path d="M1010.0 785.0 L1008.0 795.0" stroke="#e07a1a" stroke-width="2.2"/><rect x="991.0" y="759.0" width="26" height="25.5" fill="#2b2b2b"/><g fill="#444"><rect x="994.0" y="762.0" width="5" height="5"/><rect x="1001.6" y="762.0" width="5" height="5"/><rect x="1009.2" y="762.0" width="5" height="5"/></g><rect x="991.0" y="775.0" width="26" height="1" fill="#444"/><g transform="translate(1004.2 836.3) rotate(7)"><path d="M-5.5 -43 Q0 -50 5.5 -43 L6 0 L-6 0 Z" fill="#ecece6" stroke="#b8b8b0" stroke-width="0.7"/><path d="M-6 0 L6 0 L5 44 Q0 50 -5 44 Z" fill="#ecece6" stroke="#b8b8b0" stroke-width="0.7"/><path d="M-21 -5.5 Q-27 0 -21 5.5 L0 6.5 L21 5.5 Q27 0 21 -5.5 L0 -6.5 Z" fill="#ecece6" stroke="#b8b8b0" stroke-width="0.7"/><circle r="8.5" fill="#ecece6" stroke="#b8b8b0" stroke-width="0.7"/><circle r="5" fill="none" stroke="#999" stroke-width="0.8"/><path d="M-3 0 H3 M0 -3 V3" stroke="#888" stroke-width="0.8"/><g fill="#d9823a"><circle cx="0" cy="-40.0" r="1.2"/><circle cx="0" cy="-35.0" r="1.2"/><circle cx="0" cy="-30.0" r="1.2"/><circle cx="0" cy="-25.0" r="1.2"/></g><g fill="#3a6fa3"><circle cx="0.0" cy="-20.0" r="1.2"/><circle cx="0.0" cy="-15.0" r="1.2"/><circle cx="0.0" cy="15.0" r="1.2"/><circle cx="0.0" cy="20.0" r="1.2"/><circle cx="0.0" cy="25.0" r="1.2"/><circle cx="0.0" cy="30.0" r="1.2"/><circle cx="0.0" cy="35.0" r="1.2"/><circle cx="0.0" cy="40.0" r="1.2"/><circle cx="-20.0" cy="0" r="1.2"/><circle cx="-15.0" cy="0" r="1.2"/><circle cx="15.0" cy="0" r="1.2"/><circle cx="20.0" cy="0" r="1.2"/></g></g><g stroke="#9a9a9a" stroke-width="1.4"><path d="M826 948.7 H834"/><path d="M826 957 H834"/><path d="M826 965 H834"/></g><path d="M833.3 946.7 L850 946.7 Q858.3 946.7 858.3 956.7 Q858.3 966.7 850 966.7 L833.3 966.7 Z" fill="#333"/><text x="0" y="0" font-size="6" fill="#ccc" font-family="Liberation Sans" transform="translate(842 951) rotate(90)">TMP</text><rect x="1123" y="644.7" width="131.7" height="268.8" rx="13" fill="#333333" stroke="#222" stroke-width="1"/><circle cx="1188.8" cy="709.5" r="28.5" fill="none" stroke="#d8d8d8" stroke-width="1"/><circle cx="1188.8" cy="673.7" r="14.3" fill="#333" stroke="#d8d8d8" stroke-width="1"/><circle cx="1228.2" cy="673.7" r="14.3" fill="#333" stroke="#d8d8d8" stroke-width="1"/><circle cx="1149.4" cy="709.5" r="14.3" fill="#333" stroke="#d8d8d8" stroke-width="1"/><circle cx="1188.8" cy="709.5" r="14.3" fill="#333" stroke="#d8d8d8" stroke-width="1"/><circle cx="1228.2" cy="709.5" r="14.3" fill="#333" stroke="#d8d8d8" stroke-width="1"/><circle cx="1149.4" cy="744.2" r="14.3" fill="#333" stroke="#d8d8d8" stroke-width="1"/><circle cx="1188.8" cy="744.2" r="14.3" fill="#333" stroke="#d8d8d8" stroke-width="1"/><circle cx="1228.2" cy="744.2" r="14.3" fill="#333" stroke="#d8d8d8" stroke-width="1"/><circle cx="1188.8" cy="779.5" r="14.3" fill="#333" stroke="#d8d8d8" stroke-width="1"/><circle cx="1228.2" cy="779.5" r="14.3" fill="#333" stroke="#d8d8d8" stroke-width="1"/><circle cx="1149.4" cy="673.7" r="14.3" fill="#ee2a1e"/><path d="M1145.2 669.5 A6 6 0 1 0 1153.6 669.5" stroke="#fff" stroke-width="1.8" fill="none"/><path d="M1149.4 666 V673" stroke="#fff" stroke-width="1.8"/><circle cx="1149.4" cy="779.5" r="14.3" fill="#fff"/><text x="1149.4" y="784.1" font-size="13" fill="#333" text-anchor="middle" font-family="Liberation Sans">0</text><circle cx="1149.4" cy="814.2" r="14.3" fill="#fff"/><text x="1149.4" y="818.8" font-size="13" fill="#333" text-anchor="middle" font-family="Liberation Sans">1</text><circle cx="1188.8" cy="814.2" r="14.3" fill="#fff"/><text x="1188.8" y="818.8" font-size="13" fill="#333" text-anchor="middle" font-family="Liberation Sans">2</text><circle cx="1228.2" cy="814.2" r="14.3" fill="#fff"/><text x="1228.2" y="818.8" font-size="13" fill="#333" text-anchor="middle" font-family="Liberation Sans">3</text><circle cx="1149.4" cy="849.2" r="14.3" fill="#fff"/><text x="1149.4" y="853.8" font-size="13" fill="#333" text-anchor="middle" font-family="Liberation Sans">4</text><circle cx="1188.8" cy="849.2" r="14.3" fill="#fff"/><text x="1188.8" y="853.8" font-size="13" fill="#333" text-anchor="middle" font-family="Liberation Sans">5</text><circle cx="1228.2" cy="849.2" r="14.3" fill="#fff"/><text x="1228.2" y="853.8" font-size="13" fill="#333" text-anchor="middle" font-family="Liberation Sans">6</text><circle cx="1149.4" cy="884.2" r="14.3" fill="#fff"/><text x="1149.4" y="888.8" font-size="13" fill="#333" text-anchor="middle" font-family="Liberation Sans">7</text><circle cx="1188.8" cy="884.2" r="14.3" fill="#fff"/><text x="1188.8" y="888.8" font-size="13" fill="#333" text-anchor="middle" font-family="Liberation Sans">8</text><circle cx="1228.2" cy="884.2" r="14.3" fill="#fff"/><text x="1228.2" y="888.8" font-size="13" fill="#333" text-anchor="middle" font-family="Liberation Sans">9</text><text x="1188.8" y="677.0" font-size="9.5" fill="#e8e8e8" text-anchor="middle" font-family="Liberation Sans">VOL+</text><text x="1228.2" y="673.0" font-size="7.0" fill="#e8e8e8" text-anchor="middle" font-family="Liberation Sans">FUNC/</text><text x="1228.2" y="680.5" font-size="7.0" fill="#e8e8e8" text-anchor="middle" font-family="Liberation Sans">STOP</text><text x="1188.8" y="747.5" font-size="9.5" fill="#e8e8e8" text-anchor="middle" font-family="Liberation Sans">VOL-</text><text x="1188.8" y="783.0" font-size="10.0" fill="#e8e8e8" text-anchor="middle" font-family="Liberation Sans">EQ</text><text x="1228.2" y="777.0" font-size="7.0" fill="#e8e8e8" text-anchor="middle" font-family="Liberation Sans">ST/</text><text x="1228.2" y="784.5" font-size="7.0" fill="#e8e8e8" text-anchor="middle" font-family="Liberation Sans">REPT</text><g fill="#e8e8e8"><rect x="1142" y="704" width="1.8" height="11"/><path d="M1150 704 L1144 709.5 L1150 715 Z M1156 704 L1150 709.5 L1156 715 Z"/><path d="M1183 704 L1190 709.5 L1183 715 Z"/><rect x="1191" y="704" width="1.6" height="11"/><rect x="1194" y="704" width="1.6" height="11"/><path d="M1221 704 L1227 709.5 L1221 715 Z M1227 704 L1233 709.5 L1227 715 Z"/><rect x="1233.5" y="704" width="1.8" height="11"/><path d="M1143 740 L1156 740 L1149.5 749 Z"/><path d="M1221.7 748.5 L1234.7 748.5 L1228.2 739.5 Z"/></g><path d="M916.8 806.3 L1092.6 702.8 A292 292 0 0 1 1095.1 994.8 L917.6 894.3 A88 88 0 0 0 916.8 806.3 Z" fill="rgb(54,144,23)" fill-opacity="0.09"/><rect x="890.0" y="800.8" width="40" height="105" rx="2" fill="#2b86c6" stroke="#1f6198" stroke-width="1"/><rect x="892.0" y="817.8" width="36" height="73" rx="3" fill="#2c84c4" stroke="#22689f" stroke-width="1"/><g fill="#3a93d4"><rect x="893.0" y="803.8" width="10" height="12"/><rect x="917.0" y="803.8" width="10" height="12"/><rect x="893.0" y="891.8" width="10" height="12"/><rect x="917.0" y="891.8" width="10" height="12"/></g><circle cx="910.0" cy="840.8" r="15" fill="#1f6aa6"/><circle cx="910.0" cy="840.8" r="13" fill="#5aa6e6"/><circle cx="914.0" cy="858.8" r="11" fill="#62aee9"/><circle cx="910.0" cy="897.8" r="5.5" fill="#f3f4f6"/><rect x="907.5" y="899.8" width="5" height="7" fill="#f3f4f6"/><path d="M904.0 783.5 L909.0 802.5" stroke="#6b3a1e" stroke-width="2.2"/><path d="M910.0 783.5 L912.0 802.5" stroke="#c9181d" stroke-width="2.2"/><path d="M916.0 783.5 L914.0 793.5" stroke="#e07a1a" stroke-width="2.2"/><rect x="897.0" y="757.5" width="26" height="25.5" fill="#2b2b2b"/><g fill="#444"><rect x="900.0" y="760.5" width="5" height="5"/><rect x="907.6" y="760.5" width="5" height="5"/><rect x="915.2" y="760.5" width="5" height="5"/></g><rect x="897.0" y="773.5" width="26" height="1" fill="#444"/><g transform="translate(910.0 835.0) rotate(7)"><path d="M-5.5 -43 Q0 -50 5.5 -43 L6 0 L-6 0 Z" fill="#ecece6" stroke="#b8b8b0" stroke-width="0.7"/><path d="M-6 0 L6 0 L5 44 Q0 50 -5 44 Z" fill="#ecece6" stroke="#b8b8b0" stroke-width="0.7"/><path d="M-21 -5.5 Q-27 0 -21 5.5 L0 6.5 L21 5.5 Q27 0 21 -5.5 L0 -6.5 Z" fill="#ecece6" stroke="#b8b8b0" stroke-width="0.7"/><circle r="8.5" fill="#ecece6" stroke="#b8b8b0" stroke-width="0.7"/><circle r="5" fill="none" stroke="#999" stroke-width="0.8"/><path d="M-3 0 H3 M0 -3 V3" stroke="#888" stroke-width="0.8"/><g fill="#d9823a"><circle cx="0" cy="-40.0" r="1.2"/><circle cx="0" cy="-35.0" r="1.2"/><circle cx="0" cy="-30.0" r="1.2"/><circle cx="0" cy="-25.0" r="1.2"/></g><g fill="#3a6fa3"><circle cx="0.0" cy="-20.0" r="1.2"/><circle cx="0.0" cy="-15.0" r="1.2"/><circle cx="0.0" cy="15.0" r="1.2"/><circle cx="0.0" cy="20.0" r="1.2"/><circle cx="0.0" cy="25.0" r="1.2"/><circle cx="0.0" cy="30.0" r="1.2"/><circle cx="0.0" cy="35.0" r="1.2"/><circle cx="0.0" cy="40.0" r="1.2"/><circle cx="-20.0" cy="0" r="1.2"/><circle cx="-15.0" cy="0" r="1.2"/><circle cx="15.0" cy="0" r="1.2"/><circle cx="20.0" cy="0" r="1.2"/></g></g><circle cx="956.3" cy="838.7" r="12.6" fill="#00999a" stroke="#1462a8" stroke-width="1.4"/></svg>
<!-- RIGHT PANEL -->
<div id="rp" class="a"></div>
<svg class="a" style="left:0;top:250px" width="1920" height="780" viewBox="0 250 1920 780">
<!-- canvas expand -->
<circle cx="31.4" cy="281.4" r="21" fill="#f7f8fa" stroke="#8a9099" stroke-width="1.1"/>
<path d="M22.5 278.3 V273 H27.8 M35 273 H40.3 V278.3 M22.5 285 V290.3 H27.8 M35 290.3 H40.3 V285" stroke="#aaaaaa" stroke-width="1.3" fill="none"/>
<!-- dropdown -->
<rect x="1584" y="258.5" width="266" height="55.5" rx="4" fill="#f0f1f3" stroke="#e2e4e8" stroke-width="1"/>
<rect x="1585" y="313" width="264" height="2" fill="#e4e6ea" opacity="0.7"/>
<path d="M1820.5 286 H1830.5 L1825.5 291.5 Z" fill="#111"/>
<rect x="1859" y="250" width="1" height="73" fill="#dde0e5"/>
<rect x="1575" y="323" width="345" height="1" fill="#dde0e5"/>
<g fill="#111"><rect x="1878.5" y="276.5" width="3.5" height="3.5"/><rect x="1878.5" y="284" width="3.5" height="3.5"/><rect x="1878.5" y="291.5" width="3.5" height="3.5"/><rect x="1883.5" y="276.5" width="17" height="3.5"/><rect x="1883.5" y="284" width="17" height="3.5"/><rect x="1883.5" y="291.5" width="17" height="3.5"/></g>
<!-- search -->
<rect x="1588.5" y="337.5" width="319" height="42" fill="#fff" stroke="#dadde2" stroke-width="1"/>
<circle cx="1880" cy="357" r="8" fill="none" stroke="#d5d9de" stroke-width="2.8"/><path d="M1885.5 362.5 L1892 369" stroke="#d5d9de" stroke-width="3.2" stroke-linecap="round"/>
<!-- scrollbar -->
<path d="M1904.5 406 L1909.7 401 L1914.9 406 Z" fill="#a3a3a3"/>
<rect x="1901" y="413" width="19" height="157" fill="#c1c1c1"/>
<path d="M1904 1011 L1908.6 1016 L1913.2 1011 Z" fill="#505050"/>
<!-- collapse tab -->
<path d="M1582.8 611.2 H1563.2 V669.4 H1582.8" fill="#f0f1f3" stroke="#d8dee5" stroke-width="1"/>
<path d="M1571 627.5 L1578.2 641 L1571 654.5" stroke="#000" stroke-width="2.6" fill="none" stroke-linecap="round"/>
<!-- component icons -->
<clipPath id="cmpclip"><rect x="1575" y="390" width="325" height="635"/></clipPath>
<g clip-path="url(#cmpclip)">
<!-- resistor -->
<rect x="1663" y="443" width="2" height="70" fill="#8f8f8f"/>
<path d="M1658 454 Q1663.8 452 1670 454 Q1672.5 462 1670 470 L1670 486 Q1672.5 494 1670 501.5 Q1663.8 503.5 1658 501.5 Q1655.5 494 1658 486 L1658 470 Q1655.5 462 1658 454 Z" fill="#e3c282"/>
<rect x="1657" y="462.5" width="14" height="1.5" fill="#c3ad43"/><rect x="1656.5" y="474" width="15" height="3" fill="#e8201e"/><rect x="1656.5" y="481.5" width="15" height="3" fill="#111"/><rect x="1656" y="490" width="16" height="3" fill="#8a4a16"/>
<!-- LED -->
<path d="M1796 500 V522" stroke="#8f8f8f" stroke-width="4" stroke-linecap="round"/>
<path d="M1816 500 V505 L1826 514 V522" stroke="#8f8f8f" stroke-width="4" stroke-linecap="round" stroke-linejoin="round" fill="none"/>
<path d="M1786 484 V455 Q1786 433.5 1807.5 433.5 Q1829 433.5 1829 455 V484 Z" fill="#7d1e20"/>
<ellipse cx="1809" cy="491.5" rx="23.5" ry="9.5" fill="#7d1e20"/><ellipse cx="1807.5" cy="484" rx="21.5" ry="6" fill="#8f2a2c"/>
<path d="M1786 484 V455 Q1786 433.5 1807.5 433.5 Q1829 433.5 1829 455 V484 Q1807.5 492 1786 484 Z" fill="#7d1e20"/>
<!-- pushbutton -->
<g fill="#9e9e9e"><rect x="1639.5" y="622.5" width="3" height="10"/><rect x="1686.5" y="622.5" width="3" height="10"/><rect x="1639.5" y="688" width="3" height="10"/><rect x="1686.5" y="688" width="3" height="10"/></g>
<rect x="1636.5" y="630.7" width="57" height="59" rx="3" fill="#c8c8c8" stroke="#b5b5b5" stroke-width="1"/>
<g fill="#444"><circle cx="1644.6" cy="640.6" r="5.8"/><circle cx="1684.7" cy="640.6" r="5.8"/><circle cx="1644.6" cy="680" r="5.8"/><circle cx="1684.7" cy="680" r="5.8"/></g>
<circle cx="1664.5" cy="662" r="16.3" fill="#aaa"/><circle cx="1664.2" cy="660" r="16.3" fill="#333"/>
<!-- potentiometer -->
<g fill="#9e9e9e"><rect x="1792.3" y="690" width="3" height="16"/><rect x="1808.5" y="690" width="3" height="16"/><rect x="1824.9" y="690" width="3" height="16"/></g>
<circle cx="1810" cy="656.4" r="38.7" fill="#2a4458"/>
<circle cx="1810" cy="656.4" r="31" fill="none" stroke="#3f5e78" stroke-width="3" stroke-dasharray="1 1.5"/>
<circle cx="1810" cy="656.4" r="28.5" fill="#6b9fd4"/>
<path d="M1807 662 L1788 677" stroke="#1d3142" stroke-width="6" stroke-linecap="round"/>
<g fill="#6fa3d6"><circle cx="1810" cy="622.5" r="1.3"/><circle cx="1834" cy="632.4" r="1.3"/><circle cx="1843.9" cy="656.4" r="1.3"/><circle cx="1786" cy="632.4" r="1.3"/><circle cx="1776.1" cy="656.4" r="1.3"/><circle cx="1834" cy="680.4" r="1.3"/><circle cx="1786" cy="680.4" r="1.3"/></g>
<!-- capacitor -->
<g fill="#9e9e9e"><rect x="1644" y="865" width="4" height="25" rx="1.5"/><rect x="1677.7" y="865" width="4" height="25" rx="1.5"/></g>
<path d="M1633 871 Q1634 855 1633 846 Q1628 838 1630.5 824 Q1636 797.7 1663 797.7 Q1690 797.7 1695.6 824 Q1698 838 1693 846 Q1692 855 1693 871 Q1680 862 1663 862 Q1646 862 1633 871 Z" fill="#1a5799"/>
<path d="M1640 818 Q1644 808 1652 804" stroke="#5d8fc7" stroke-width="1.5" fill="none"/>
<!-- slideswitch -->
<g fill="#9e9e9e"><rect x="1775.5" y="849" width="4" height="20" rx="1.5"/><rect x="1808" y="849" width="4" height="20" rx="1.5"/><rect x="1840.6" y="849" width="4" height="20" rx="1.5"/></g>
<rect x="1765.3" y="816.9" width="91.2" height="32.6" rx="2" fill="#585858"/>
<rect x="1780.3" y="821.4" width="61.1" height="24.4" fill="#262626"/>
<g fill="#d0d0d0"><rect x="1783" y="824.5" width="2.4" height="18"/><rect x="1787.8" y="824.5" width="2.4" height="18"/><rect x="1792.6" y="824.5" width="2.4" height="18"/><rect x="1797.4" y="824.5" width="2.4" height="18"/><rect x="1802.2" y="824.5" width="2.4" height="18"/></g>
<!-- battery -->
<rect x="1611" y="1005" width="5" height="25" fill="#333"/><rect x="1605" y="1022" width="8" height="2" fill="#333"/>
<rect x="1616" y="1010" width="9" height="20" fill="#aaa"/>
<rect x="1624.7" y="997" width="30" height="35" fill="#d68b4a"/>
<rect x="1654" y="997" width="68.5" height="35" fill="#333"/>
<path d="M1678 1016 L1686 1020 L1678 1024" stroke="#fff" stroke-width="1.5" fill="none"/>
<!-- coin battery -->
<circle cx="1810" cy="1025" r="35" fill="#333"/><circle cx="1810" cy="1026" r="31" fill="#cfcfcf"/>
<rect x="1802" y="983" width="16" height="8" fill="#ddd" stroke="#333" stroke-width="1"/>
<path d="M1807 982 L1810 975 L1813 982 Z" fill="#c8141b"/>
<path d="M1810 1014 V1026 M1804 1020 H1816" stroke="#e8e8e8" stroke-width="1"/>
</g>
</svg>
<div class="a" style="left:1603px;top:267px;font-size:13px;line-height:18px;color:#3c4752;letter-spacing:-0.15px">Components</div>
<div class="a" style="left:1602px;top:283px;font-size:19px;line-height:24px;color:#2f3b47">Basic</div>
<div class="a" style="left:1599px;top:346px;font-size:18px;line-height:24px;color:#7b7f84">Search</div>
<div class="clbl" style="left:1593.5px;top:540px">Resistor</div>
<div class="clbl" style="left:1740.5px;top:540px">LED</div>
<div class="clbl" style="left:1593.5px;top:722px">Pushbutton</div>
<div class="clbl" style="left:1740.5px;top:722px">Potentiometer</div>
<div class="clbl" style="left:1593.5px;top:904px">Capacitor</div>
<div class="clbl" style="left:1740.5px;top:904px">Slideswitch</div>

<!-- PIR PANEL -->
<div class="a" style="left:1235px;top:260px;width:330px;height:234px;border:2px solid #0d93d5;border-radius:3px;background:#fff"></div>
<div class="a" style="left:1238px;top:263px;width:324px;height:43px;background:#0a96d6;color:#fff;font-weight:bold;font-size:19px;line-height:42px;padding-left:8px;letter-spacing:-0.9px">PIR Sensor</div>
<div class="prow" style="top:311px"><div class="l" style="width:67px">Name</div><div class="v" style="left:75px">1</div></div>
<div class="prow" style="top:356px"><div class="l" style="width:87px">Target X</div><div class="v" style="left:96px">40.12</div></div>
<div class="prow" style="top:401px"><div class="l" style="width:87px">Target Y</div><div class="v" style="left:96px">-165.63</div></div>
<div class="prow" style="top:446px"><div class="l" style="width:87px">Target Y</div><div class="v" style="left:96px">-181.75</div></div>

<!-- TASKBAR -->
<div id="taskbar" class="a"></div>
<div class="a" style="left:60px;top:1030px;width:429px;height:50px;background:#fff;border:1px solid #cfcfcf;border-bottom:none"></div>
<div class="a" style="left:738px;top:1030px;width:61px;height:50px;background:rgba(255,255,255,0.35)"></div>
<svg class="a" style="left:0;top:1030px" width="1920" height="50" viewBox="0 1030 1920 50">
<g fill="#000"><path d="M20 1047 L27.8 1046 V1054 H20 Z"/><path d="M29 1045.7 L40 1044.3 V1054 H29 Z"/><path d="M20 1055 H27.8 V1063.5 L20 1062.6 Z"/><path d="M29 1055 H40 V1065 L29 1063.7 Z"/></g>
<circle cx="88.5" cy="1051.5" r="6.5" fill="none" stroke="#111" stroke-width="1.6"/><path d="M83.7 1056.3 L76.5 1063.5" stroke="#111" stroke-width="1.8"/>
<circle cx="520" cy="1055" r="8.5" fill="none" stroke="#111" stroke-width="2.6"/>
<g stroke="#111" stroke-width="1.5" fill="none"><rect x="570.5" y="1050.5" width="12" height="8"/><path d="M570.5 1049 V1046 H582.5 V1049 M570.5 1060 V1063.3 H582.5 V1060 M588.4 1045 V1064"/></g><rect x="587.2" y="1051" width="2.6" height="2.6" fill="#111"/>
<!-- file explorer -->
<path d="M629 1044 H640 L643 1047 H657.5 V1066 H629 Z" fill="#e8a42b"/><rect x="629" y="1050" width="28.5" height="16" fill="#f9c940"/><rect x="637" y="1056" width="12" height="8" fill="#2d7cd6"/><rect x="639.5" y="1058" width="7" height="8" fill="#f9c940"/>
<!-- edge -->
<circle cx="705.5" cy="1055" r="15" fill="#1f8ad6"/><path d="M692 1060 Q697 1044 712 1047 Q720 1050 719 1058 L700 1058 Q701 1066 712 1065 Q717 1064 720 1062 Q715 1071 704 1070 Q693 1068 692 1060 Z" fill="#2fc56f"/><circle cx="709" cy="1054" r="6" fill="#1d6fc2"/>
<!-- chrome -->
<circle cx="767.5" cy="1055" r="15" fill="#db4437"/><path d="M767.5 1055 L754.5 1047.5 A15 15 0 0 0 760 1068.3 Z" fill="#0f9d58"/><path d="M767.5 1055 L760 1068.3 A15 15 0 0 0 782.5 1055 Z" fill="#f4b400"/><circle cx="767.5" cy="1055" r="6.5" fill="#fff"/><circle cx="767.5" cy="1055" r="5" fill="#4285f4"/>
<circle cx="776" cy="1062.5" r="8" fill="#0b4d3c" stroke="#fff" stroke-width="1"/><rect x="775.2" y="1058.5" width="1.6" height="8" fill="#fff"/>
<rect x="738" y="1076" width="61" height="4" fill="#3b83d6"/>
<!-- store -->
<path d="M814 1047 H845 V1070 H814 Z" fill="#2b2b2b"/><path d="M822 1047 V1043 Q822 1039 829.5 1039 Q837 1039 837 1043 V1047" stroke="#2b2b2b" stroke-width="2.5" fill="none"/>
<rect x="825" y="1052" width="4" height="4" fill="#f25022"/><rect x="830" y="1052" width="4" height="4" fill="#7fba00"/><rect x="825" y="1057" width="4" height="4" fill="#00a4ef"/><rect x="830" y="1057" width="4" height="4" fill="#ffb900"/>
<!-- mail -->
<path d="M876 1052 L892 1041 L908 1052 V1067 H876 Z" fill="#1a74d2"/><path d="M876 1052 L892 1062 L908 1052 V1067 H876 Z" fill="#3aa0f3"/><path d="M876 1052 L892 1041 L908 1052 L892 1060 Z" fill="#fff" opacity="0.85"/>
<!-- instagram -->
<defs><linearGradient id="ig" x1="0" y1="1" x2="1" y2="0"><stop offset="0" stop-color="#fdb238"/><stop offset="0.45" stop-color="#e6245d"/><stop offset="1" stop-color="#8a3ab9"/></linearGradient></defs>
<rect x="1001" y="1040" width="30" height="30" rx="8" fill="url(#ig)"/><rect x="1006" y="1045" width="20" height="20" rx="6" fill="none" stroke="#fff" stroke-width="2.2"/><circle cx="1016" cy="1055" r="4.5" fill="none" stroke="#fff" stroke-width="2.2"/><circle cx="1022" cy="1049" r="1.3" fill="#fff"/>
<!-- itunes -->
<circle cx="1077.5" cy="1055" r="13.5" fill="#fbeefa" stroke="#d884d8" stroke-width="2"/><path d="M1073 1062 V1049 L1082 1047 V1060" stroke="#c95fd0" stroke-width="2" fill="none"/><circle cx="1071.5" cy="1062" r="2.5" fill="#c95fd0"/><circle cx="1080.5" cy="1060" r="2.5" fill="#c95fd0"/>
<!-- zoom -->
<rect x="1125" y="1041" width="29" height="29" rx="9" fill="#3d8bf7"/><rect x="1131" y="1050" width="12" height="11" rx="2" fill="#fff"/><path d="M1144 1053 L1149 1050 L1149 1061 L1144 1058 Z" fill="#fff"/>
<rect x="1115" y="1076" width="50" height="4" fill="#3b83d6"/>
<!-- word -->
<rect x="1193" y="1043" width="22" height="25" rx="2" fill="#41a5ee"/><rect x="1193" y="1049" width="22" height="6" fill="#2b7cd3"/><rect x="1193" y="1055" width="22" height="7" fill="#185abd"/>
<rect x="1187.5" y="1047" width="16" height="16" rx="1.5" fill="#185abd"/><text x="1195.5" y="1059.5" font-size="11" font-weight="bold" fill="#fff" text-anchor="middle" font-family="Liberation Sans">W</text>
<rect x="1177" y="1076" width="50.5" height="4" fill="#3b83d6"/>
<!-- tray -->
<g fill="#bfe3f8"><circle cx="1451.8" cy="1056.5" r="5"/><circle cx="1459.2" cy="1052.3" r="6.5"/><circle cx="1466" cy="1055.5" r="6"/><rect x="1451.8" y="1055" width="14" height="6.8"/></g><circle cx="1467" cy="1056" r="4.5" fill="#a6d3ec"/><path d="M1459.8 1056.5 Q1463 1061 1462.8 1062.5 A3 3 0 0 1 1456.8 1062.5 Q1456.6 1061 1459.8 1056.5 Z" fill="#3d9cf0"/>
<path d="M1544.5 1059 L1552 1051 L1559.5 1059" stroke="#111" stroke-width="1.5" fill="none"/>
<rect x="1576" y="1050" width="9" height="10" rx="1.5" fill="none" stroke="#111" stroke-width="1.3"/><path d="M1585 1053 L1590 1050 V1060 L1585 1057" fill="none" stroke="#111" stroke-width="1.3"/><path d="M1578 1047 Q1583 1045 1588 1047 M1578 1063 Q1583 1065 1588 1063" stroke="#111" stroke-width="1.1" fill="none"/>
<path d="M1602 1060 Q1600 1052 1608 1051 Q1611 1045 1617 1048 Q1622 1049 1621 1054" fill="#555" /><circle cx="1616.5" cy="1060" r="5.5" fill="#e81123"/><path d="M1614 1057.5 L1619 1062.5 M1619 1057.5 L1614 1062.5" stroke="#fff" stroke-width="1.3"/>
<rect x="1632" y="1046" width="19" height="17" fill="none" stroke="#111" stroke-width="1.4"/><path d="M1637 1056 Q1637 1051 1642 1051 L1646 1051 M1644 1049 L1646 1051 L1644 1053" stroke="#111" stroke-width="1.1" fill="none"/><circle cx="1647.5" cy="1061" r="4.5" fill="#f7960c"/>
<rect x="1666" y="1051.5" width="14" height="10" fill="#111"/><rect x="1680" y="1054" width="2" height="5" fill="#111"/><path d="M1663 1047 V1053 M1666 1047 V1053 M1662 1052 H1667" stroke="#111" stroke-width="1.2"/>
<path d="M1692 1052 H1695.5 L1700 1048 V1063 L1695.5 1059 H1692 Z" fill="none" stroke="#111" stroke-width="1.3"/><path d="M1703.5 1051 L1710 1059 M1710 1051 L1703.5 1059" stroke="#111" stroke-width="1.3"/>
<path d="M1869 1044.8 H1889.4 V1059 H1876 L1872 1063 V1059 H1869 Z" fill="#111"/><g stroke="#fff" stroke-width="1.2"><path d="M1872 1049 H1886 M1872 1052 H1886 M1872 1055 H1882"/></g>
<circle cx="1888" cy="1064.5" r="9.5" fill="#e6dede" stroke="#888" stroke-width="1"/><text x="1888" y="1069.5" font-size="13" fill="#111" text-anchor="middle" font-family="Liberation Sans">3</text>
<rect x="1915" y="1030" width="1" height="50" fill="#c9c0c0"/>
</svg>
<div class="a" style="left:110px;top:1044px;font-size:18.5px;line-height:24px;color:#222">Type here to search</div>
<div class="a" style="left:1484px;top:1045px;font-size:18px;line-height:22px;color:#111">29°C</div>
<div class="a" style="left:1725px;top:1046px;font-size:15px;line-height:20px;color:#111">ENG</div>
<div class="a" style="left:1791px;top:1035px;font-size:15px;line-height:18px;color:#111">11:16</div>
<div class="a" style="left:1770px;top:1057px;font-size:15px;line-height:18px;color:#111">07-10-2021</div>
</body></html>
